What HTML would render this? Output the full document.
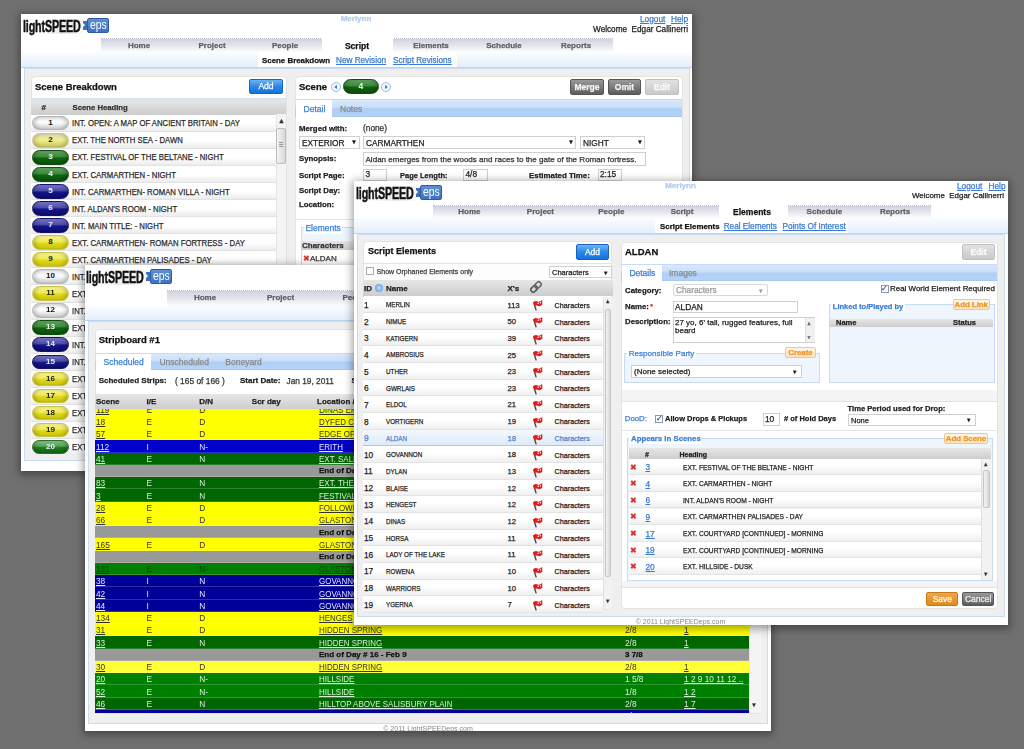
<!DOCTYPE html><html><head><meta charset="utf-8"><style>
*{margin:0;padding:0;box-sizing:border-box}
html,body{width:1024px;height:749px;overflow:hidden}
body{background:#707070;position:relative;font-family:"Liberation Sans",sans-serif;}
.win{position:absolute;background:#fff;overflow:hidden;box-shadow:0 2px 8px 2px rgba(0,0,0,.36);}
.pg{position:absolute;width:1024px;height:749px}
.t{position:absolute;white-space:nowrap;-webkit-text-stroke:.25px currentColor}
.win{filter:blur(.35px)}
.r{position:absolute}
.nav{background:linear-gradient(#cfd2df,#e9eaf0 60%,#fdfdfd);border-top:1px dotted #b9bccb}
.band{background:linear-gradient(#fbfdff,#e4eefa);border-bottom:1px solid #bcd5f1}
.cbg{background:#efefef}
.ib{border:1px solid #c8dcf4}
.pan{background:#fff;border:1px solid #e3e3e3;border-radius:4px}
.hdr{background:linear-gradient(#e6e6e6,#cdcdcd)}
.tabs{background:linear-gradient(#d9e8fb,#c9dff9 45%,#afcff6 55%,#b5d2f6);border-top:1px solid #c6dbf5;border-bottom:1px solid #a9c8ef}
.btnb{background:linear-gradient(#6ab4f6,#2a8ae8 50%,#1672dc);border:1px solid #1a62c0;border-radius:2px}
.btng{background:linear-gradient(#9a9a9a,#5c5c5c);border:1px solid #555;border-radius:2px}
.btnl{background:linear-gradient(#e2e2e2,#c9c9c9);border:1px solid #c0c0c0;border-radius:2px}
.btno{background:linear-gradient(#fff6e8,#fde3bd);border:1px solid #f2c68a;border-radius:2px}
.inp{background:#fff;border:1px solid #cfcfcf}
.logo1{position:absolute;font-weight:bold;color:#111;transform-origin:0 0;}
.eps{position:absolute;background:linear-gradient(#5d8fd6,#3f72bf);border:1px solid #2e5ca0;border-radius:2px;color:#fff;text-align:center}
.pill{position:absolute;border-radius:8px;text-align:center;font-weight:bold;box-shadow:inset 5px 0 4px -3px rgba(0,0,0,.22),inset -5px 0 4px -3px rgba(0,0,0,.22)}
</style></head><body><div class="win" id="w1" style="left:21px;top:14px;width:671px;height:457px"><div class="pg" style="left:-21px;top:-14px">
<div class="r " style="left:37.00px;top:19.00px;width:48.00px;height:15.00px;background:linear-gradient(100deg,rgba(225,225,225,0) 0%,rgba(215,215,215,.55) 60%,rgba(230,230,230,.2));transform:skewX(-20deg);"></div>
<div class="logo1" style="left:23px;top:17px;font-size:16px;line-height:20px;transform:scaleX(.67);letter-spacing:-0.2px;-webkit-text-stroke:.5px #111">lightSPEED</div>
<div class="r" style="left:82.5px;top:20.5px;width:6px;height:9px;background:#3f6fb8"></div>
<div class="eps" style="left:86.5px;top:18px;width:22.5px;height:14.5px;"><div style="position:absolute;left:2.5px;top:-2.5px;font-size:13px;line-height:16px;transform:scaleX(.8);transform-origin:0 0">eps</div></div>
<div class="r" style="left:82.5px;top:22.5px;width:0;height:0;border-top:2.5px solid transparent;border-bottom:2.5px solid transparent;border-left:2.5px solid #fff"></div>
<div class="t " style="left:206.00px;width:300px;text-align:center;top:15.23px;font-size:8px;line-height:8px;color:#b0cbee;font-weight:bold;">Merlynn</div>
<div class="t " style="left:640.00px;top:14.97px;font-size:8.3px;line-height:8.3px;color:#3a7bd0;text-decoration:underline;">Logout</div>
<div class="t " style="left:671.00px;top:14.97px;font-size:8.3px;line-height:8.3px;color:#3a7bd0;text-decoration:underline;">Help</div>
<div class="t " style="left:288.00px;width:400px;text-align:right;top:25.56px;font-size:8.2px;line-height:8.2px;color:#222;">Welcome  Edgar Callinerri</div>
<div class="r nav" style="left:101.00px;top:38.00px;width:512.00px;height:14.00px;"></div>
<div class="r " style="left:322.00px;top:38.00px;width:71.00px;height:14.00px;background:#fff"></div>
<div class="t " style="left:99.00px;width:80px;text-align:center;top:42.23px;font-size:8px;line-height:8px;color:#606060;font-weight:bold;">Home</div>
<div class="t " style="left:172.00px;width:80px;text-align:center;top:42.23px;font-size:8px;line-height:8px;color:#606060;font-weight:bold;">Project</div>
<div class="t " style="left:245.00px;width:80px;text-align:center;top:42.23px;font-size:8px;line-height:8px;color:#606060;font-weight:bold;">People</div>
<div class="t " style="left:317.00px;width:80px;text-align:center;top:41.80px;font-size:8.5px;line-height:8.5px;color:#111;font-weight:bold;">Script</div>
<div class="t " style="left:391.00px;width:80px;text-align:center;top:42.23px;font-size:8px;line-height:8px;color:#606060;font-weight:bold;">Elements</div>
<div class="t " style="left:464.00px;width:80px;text-align:center;top:42.23px;font-size:8px;line-height:8px;color:#606060;font-weight:bold;">Schedule</div>
<div class="t " style="left:536.00px;width:80px;text-align:center;top:42.23px;font-size:8px;line-height:8px;color:#606060;font-weight:bold;">Reports</div>
<div class="r band" style="left:21.00px;top:52.00px;width:671.00px;height:16.00px;"></div>
<div class="r " style="left:258.00px;top:52.00px;width:199.00px;height:15.00px;background:#fff"></div>
<div class="t " style="left:262.00px;top:57.31px;font-size:7.9px;line-height:7.9px;color:#111;font-weight:bold;">Scene Breakdown</div>
<div class="t " style="left:336.00px;top:57.06px;font-size:8.2px;line-height:8.2px;color:#3a7bd0;text-decoration:underline;">New Revision</div>
<div class="t " style="left:393.00px;top:57.06px;font-size:8.2px;line-height:8.2px;color:#3a7bd0;text-decoration:underline;">Script Revisions</div>
<div class="r " style="left:24.00px;top:68.00px;width:665.50px;height:393.00px;background:#efefef"></div>
<div class="r ib" style="left:24.00px;top:68.00px;width:665.50px;height:393.00px;"></div>
<div class="r pan" style="left:31.00px;top:76.00px;width:256.00px;height:379.00px;"></div>
<div class="t " style="left:35.00px;top:81.96px;font-size:9.5px;line-height:9.5px;color:#111;font-weight:bold;">Scene Breakdown</div>
<div class="r btnb" style="left:249.00px;top:79.00px;width:34.00px;height:15.00px;"></div>
<div class="t " style="left:246.00px;width:40px;text-align:center;top:82.30px;font-size:8.5px;line-height:8.5px;color:#fff;">Add</div>
<div class="r " style="left:31.00px;top:98.00px;width:256.00px;height:1.50px;background:#d5e5f7"></div>
<div class="r hdr" style="left:31.00px;top:99.50px;width:255.00px;height:15.50px;"></div>
<div class="t " style="left:41.50px;top:103.73px;font-size:8px;line-height:8px;color:#333;font-weight:bold;">#</div>
<div class="t " style="left:72.60px;top:103.98px;font-size:7.7px;line-height:7.7px;color:#333;font-weight:bold;">Scene Heading</div>
<div class="r" style="left:31.00px;top:115.00px;width:245.00px;height:339.50px;overflow:hidden"><div class="pg" style="left:-31.00px;top:-115.00px">
<div class="r " style="left:31.00px;top:115.00px;width:245.00px;height:17.00px;background:linear-gradient(#ffffff 55%,#ececec);border-bottom:1px solid #e2e2e2"></div>
<div class="pill" style="left:32.00px;top:115.80px;width:37.00px;height:14.70px;background:linear-gradient(#dcdcdc,#ffffff 40%,#f6f6f6 55%,#c9c9c9);border:1px solid #b4b4b4;color:#111;font-size:8px;line-height:12.70px">1</div>
<div class="t " style="left:72.00px;top:119.38px;font-size:9px;line-height:9px;color:#2a2a2a;transform:scaleX(0.86);transform-origin:0 0;">INT. OPEN: A MAP OF ANCIENT BRITAIN - DAY</div>
<div class="r " style="left:31.00px;top:132.05px;width:245.00px;height:17.00px;background:linear-gradient(#ffffff 55%,#ececec);border-bottom:1px solid #e2e2e2"></div>
<div class="pill" style="left:32.00px;top:132.85px;width:37.00px;height:14.70px;background:linear-gradient(#d9d2ae,#f1ef92 40%,#ecea80 55%,#c6c062);border:1px solid #c8c190;color:#222;font-size:8px;line-height:12.70px">2</div>
<div class="t " style="left:72.00px;top:136.43px;font-size:9px;line-height:9px;color:#2a2a2a;transform:scaleX(0.86);transform-origin:0 0;">EXT. THE NORTH SEA - DAWN</div>
<div class="r " style="left:31.00px;top:149.10px;width:245.00px;height:17.00px;background:linear-gradient(#ffffff 55%,#ececec);border-bottom:1px solid #e2e2e2"></div>
<div class="pill" style="left:32.00px;top:149.90px;width:37.00px;height:14.70px;background:linear-gradient(#5f9f5f,#3f8b3f 42%,#0f650f 55%,#0a4e0a);border:1px solid #0d4d0d;color:#e8f4e8;font-size:8px;line-height:12.70px">3</div>
<div class="t " style="left:72.00px;top:153.48px;font-size:9px;line-height:9px;color:#2a2a2a;transform:scaleX(0.86);transform-origin:0 0;">EXT. FESTIVAL OF THE BELTANE - NIGHT</div>
<div class="r " style="left:31.00px;top:166.15px;width:245.00px;height:17.00px;background:linear-gradient(#ffffff 55%,#ececec);border-bottom:1px solid #e2e2e2"></div>
<div class="pill" style="left:32.00px;top:166.95px;width:37.00px;height:14.70px;background:linear-gradient(#5f9f5f,#3f8b3f 42%,#0f650f 55%,#0a4e0a);border:1px solid #0d4d0d;color:#e8f4e8;font-size:8px;line-height:12.70px">4</div>
<div class="t " style="left:72.00px;top:170.53px;font-size:9px;line-height:9px;color:#2a2a2a;transform:scaleX(0.86);transform-origin:0 0;">EXT. CARMARTHEN - NIGHT</div>
<div class="r " style="left:31.00px;top:183.20px;width:245.00px;height:17.00px;background:linear-gradient(#ffffff 55%,#ececec);border-bottom:1px solid #e2e2e2"></div>
<div class="pill" style="left:32.00px;top:184.00px;width:37.00px;height:14.70px;background:linear-gradient(#7474c2,#4d4dab 42%,#151589 55%,#0c0c6a);border:1px solid #12126a;color:#e8e8ff;font-size:8px;line-height:12.70px">5</div>
<div class="t " style="left:72.00px;top:187.58px;font-size:9px;line-height:9px;color:#2a2a2a;transform:scaleX(0.86);transform-origin:0 0;">INT. CARMARTHEN- ROMAN VILLA - NIGHT</div>
<div class="r " style="left:31.00px;top:200.25px;width:245.00px;height:17.00px;background:linear-gradient(#ffffff 55%,#ececec);border-bottom:1px solid #e2e2e2"></div>
<div class="pill" style="left:32.00px;top:201.05px;width:37.00px;height:14.70px;background:linear-gradient(#7474c2,#4d4dab 42%,#151589 55%,#0c0c6a);border:1px solid #12126a;color:#e8e8ff;font-size:8px;line-height:12.70px">6</div>
<div class="t " style="left:72.00px;top:204.63px;font-size:9px;line-height:9px;color:#2a2a2a;transform:scaleX(0.86);transform-origin:0 0;">INT. ALDAN'S ROOM - NIGHT</div>
<div class="r " style="left:31.00px;top:217.30px;width:245.00px;height:17.00px;background:linear-gradient(#ffffff 55%,#ececec);border-bottom:1px solid #e2e2e2"></div>
<div class="pill" style="left:32.00px;top:218.10px;width:37.00px;height:14.70px;background:linear-gradient(#7474c2,#4d4dab 42%,#151589 55%,#0c0c6a);border:1px solid #12126a;color:#e8e8ff;font-size:8px;line-height:12.70px">7</div>
<div class="t " style="left:72.00px;top:221.68px;font-size:9px;line-height:9px;color:#2a2a2a;transform:scaleX(0.86);transform-origin:0 0;">INT. MAIN TITLE: - NIGHT</div>
<div class="r " style="left:31.00px;top:234.35px;width:245.00px;height:17.00px;background:linear-gradient(#ffffff 55%,#ececec);border-bottom:1px solid #e2e2e2"></div>
<div class="pill" style="left:32.00px;top:235.15px;width:37.00px;height:14.70px;background:linear-gradient(#f1ee8c,#efec5c 42%,#e0da1c 55%,#c9c10c);border:1px solid #c9c24a;color:#222;font-size:8px;line-height:12.70px">8</div>
<div class="t " style="left:72.00px;top:238.73px;font-size:9px;line-height:9px;color:#2a2a2a;transform:scaleX(0.86);transform-origin:0 0;">EXT. CARMARTHEN- ROMAN FORTRESS - DAY</div>
<div class="r " style="left:31.00px;top:251.40px;width:245.00px;height:17.00px;background:linear-gradient(#ffffff 55%,#ececec);border-bottom:1px solid #e2e2e2"></div>
<div class="pill" style="left:32.00px;top:252.20px;width:37.00px;height:14.70px;background:linear-gradient(#f1ee8c,#efec5c 42%,#e0da1c 55%,#c9c10c);border:1px solid #c9c24a;color:#222;font-size:8px;line-height:12.70px">9</div>
<div class="t " style="left:72.00px;top:255.78px;font-size:9px;line-height:9px;color:#2a2a2a;transform:scaleX(0.86);transform-origin:0 0;">EXT. CARMARTHEN PALISADES - DAY</div>
<div class="r " style="left:31.00px;top:268.45px;width:245.00px;height:17.00px;background:linear-gradient(#ffffff 55%,#ececec);border-bottom:1px solid #e2e2e2"></div>
<div class="pill" style="left:32.00px;top:269.25px;width:37.00px;height:14.70px;background:linear-gradient(#dcdcdc,#ffffff 40%,#f6f6f6 55%,#c9c9c9);border:1px solid #b4b4b4;color:#111;font-size:8px;line-height:12.70px">10</div>
<div class="t " style="left:72.00px;top:272.83px;font-size:9px;line-height:9px;color:#2a2a2a;transform:scaleX(0.86);transform-origin:0 0;">INT. CARMARTHEN- ROMAN VILLA - NIGHT</div>
<div class="r " style="left:31.00px;top:285.50px;width:245.00px;height:17.00px;background:linear-gradient(#ffffff 55%,#ececec);border-bottom:1px solid #e2e2e2"></div>
<div class="pill" style="left:32.00px;top:286.30px;width:37.00px;height:14.70px;background:linear-gradient(#f1ee8c,#efec5c 42%,#e0da1c 55%,#c9c10c);border:1px solid #c9c24a;color:#222;font-size:8px;line-height:12.70px">11</div>
<div class="t " style="left:72.00px;top:289.88px;font-size:9px;line-height:9px;color:#2a2a2a;transform:scaleX(0.86);transform-origin:0 0;">EXT. CARMARTHEN - DAY</div>
<div class="r " style="left:31.00px;top:302.55px;width:245.00px;height:17.00px;background:linear-gradient(#ffffff 55%,#ececec);border-bottom:1px solid #e2e2e2"></div>
<div class="pill" style="left:32.00px;top:303.35px;width:37.00px;height:14.70px;background:linear-gradient(#dcdcdc,#ffffff 40%,#f6f6f6 55%,#c9c9c9);border:1px solid #b4b4b4;color:#111;font-size:8px;line-height:12.70px">12</div>
<div class="t " style="left:72.00px;top:306.93px;font-size:9px;line-height:9px;color:#2a2a2a;transform:scaleX(0.86);transform-origin:0 0;">INT. ROMAN VILLA - DAY</div>
<div class="r " style="left:31.00px;top:319.60px;width:245.00px;height:17.00px;background:linear-gradient(#ffffff 55%,#ececec);border-bottom:1px solid #e2e2e2"></div>
<div class="pill" style="left:32.00px;top:320.40px;width:37.00px;height:14.70px;background:linear-gradient(#5f9f5f,#3f8b3f 42%,#0f650f 55%,#0a4e0a);border:1px solid #0d4d0d;color:#e8f4e8;font-size:8px;line-height:12.70px">13</div>
<div class="t " style="left:72.00px;top:323.98px;font-size:9px;line-height:9px;color:#2a2a2a;transform:scaleX(0.86);transform-origin:0 0;">EXT. COURTYARD - NIGHT</div>
<div class="r " style="left:31.00px;top:336.65px;width:245.00px;height:17.00px;background:linear-gradient(#ffffff 55%,#ececec);border-bottom:1px solid #e2e2e2"></div>
<div class="pill" style="left:32.00px;top:337.45px;width:37.00px;height:14.70px;background:linear-gradient(#7474c2,#4d4dab 42%,#151589 55%,#0c0c6a);border:1px solid #12126a;color:#e8e8ff;font-size:8px;line-height:12.70px">14</div>
<div class="t " style="left:72.00px;top:341.03px;font-size:9px;line-height:9px;color:#2a2a2a;transform:scaleX(0.86);transform-origin:0 0;">INT. BEDROOM - NIGHT</div>
<div class="r " style="left:31.00px;top:353.70px;width:245.00px;height:17.00px;background:linear-gradient(#ffffff 55%,#ececec);border-bottom:1px solid #e2e2e2"></div>
<div class="pill" style="left:32.00px;top:354.50px;width:37.00px;height:14.70px;background:linear-gradient(#7474c2,#4d4dab 42%,#151589 55%,#0c0c6a);border:1px solid #12126a;color:#e8e8ff;font-size:8px;line-height:12.70px">15</div>
<div class="t " style="left:72.00px;top:358.08px;font-size:9px;line-height:9px;color:#2a2a2a;transform:scaleX(0.86);transform-origin:0 0;">INT. HALL - NIGHT</div>
<div class="r " style="left:31.00px;top:370.75px;width:245.00px;height:17.00px;background:linear-gradient(#ffffff 55%,#ececec);border-bottom:1px solid #e2e2e2"></div>
<div class="pill" style="left:32.00px;top:371.55px;width:37.00px;height:14.70px;background:linear-gradient(#f1ee8c,#efec5c 42%,#e0da1c 55%,#c9c10c);border:1px solid #c9c24a;color:#222;font-size:8px;line-height:12.70px">16</div>
<div class="t " style="left:72.00px;top:375.13px;font-size:9px;line-height:9px;color:#2a2a2a;transform:scaleX(0.86);transform-origin:0 0;">EXT. FOREST - DAY</div>
<div class="r " style="left:31.00px;top:387.80px;width:245.00px;height:17.00px;background:linear-gradient(#ffffff 55%,#ececec);border-bottom:1px solid #e2e2e2"></div>
<div class="pill" style="left:32.00px;top:388.60px;width:37.00px;height:14.70px;background:linear-gradient(#f1ee8c,#efec5c 42%,#e0da1c 55%,#c9c10c);border:1px solid #c9c24a;color:#222;font-size:8px;line-height:12.70px">17</div>
<div class="t " style="left:72.00px;top:392.18px;font-size:9px;line-height:9px;color:#2a2a2a;transform:scaleX(0.86);transform-origin:0 0;">EXT. COURTYARD - MORNING</div>
<div class="r " style="left:31.00px;top:404.85px;width:245.00px;height:17.00px;background:linear-gradient(#ffffff 55%,#ececec);border-bottom:1px solid #e2e2e2"></div>
<div class="pill" style="left:32.00px;top:405.65px;width:37.00px;height:14.70px;background:linear-gradient(#f1ee8c,#efec5c 42%,#e0da1c 55%,#c9c10c);border:1px solid #c9c24a;color:#222;font-size:8px;line-height:12.70px">18</div>
<div class="t " style="left:72.00px;top:409.23px;font-size:9px;line-height:9px;color:#2a2a2a;transform:scaleX(0.86);transform-origin:0 0;">EXT. COURTYARD - MORNING</div>
<div class="r " style="left:31.00px;top:421.90px;width:245.00px;height:17.00px;background:linear-gradient(#ffffff 55%,#ececec);border-bottom:1px solid #e2e2e2"></div>
<div class="pill" style="left:32.00px;top:422.70px;width:37.00px;height:14.70px;background:linear-gradient(#f1ee8c,#efec5c 42%,#e0da1c 55%,#c9c10c);border:1px solid #c9c24a;color:#222;font-size:8px;line-height:12.70px">19</div>
<div class="t " style="left:72.00px;top:426.28px;font-size:9px;line-height:9px;color:#2a2a2a;transform:scaleX(0.86);transform-origin:0 0;">EXT. CARMARTHEN - DAY</div>
<div class="r " style="left:31.00px;top:438.95px;width:245.00px;height:17.00px;background:linear-gradient(#ffffff 55%,#ececec);border-bottom:1px solid #e2e2e2"></div>
<div class="pill" style="left:32.00px;top:439.75px;width:37.00px;height:14.70px;background:linear-gradient(#7dbf7d,#56a556 42%,#1f7d1f 55%,#0f5f0f);border:1px solid #2d6d2d;color:#eef;font-size:8px;line-height:12.70px">20</div>
<div class="t " style="left:72.00px;top:443.33px;font-size:9px;line-height:9px;color:#2a2a2a;transform:scaleX(0.86);transform-origin:0 0;">EXT. HILLSIDE - DUSK</div>
</div></div>
<div class="r " style="left:276.00px;top:114.00px;width:10.00px;height:341.00px;background:#f4f4f4;border-left:1px solid #e6e6e6"></div>
<div class="r " style="left:276.00px;top:127.60px;width:9.50px;height:36.10px;background:linear-gradient(90deg,#f4f4f4,#d8d8d8);border:1px solid #bdbdbd;border-radius:2px"></div>
<div class="r " style="left:278.50px;top:142.00px;width:4.50px;height:1.00px;background:#999"></div>
<div class="r " style="left:278.50px;top:144.00px;width:4.50px;height:1.00px;background:#999"></div>
<div class="r " style="left:278.50px;top:146.00px;width:4.50px;height:1.00px;background:#999"></div>
<div class="t" style="left:278px;top:117px;font-size:7px;color:#333">&#9650;</div>
<div class="r pan" style="left:295.00px;top:76.00px;width:387.50px;height:394.00px;"></div>
<div class="t " style="left:299.00px;top:82.46px;font-size:9.5px;line-height:9.5px;color:#111;font-weight:bold;">Scene</div>
<div class="r" style="left:331px;top:82px;width:10px;height:10px;border-radius:50%;border:1px solid #9cbde6;background:#f4f8fd"></div>
<div class="r" style="left:334px;top:85px;width:0;height:0;border-top:2.5px solid transparent;border-bottom:2.5px solid transparent;border-right:3px solid #3b7fd4"></div>
<div class="r" style="left:381.4px;top:82px;width:10px;height:10px;border-radius:50%;border:1px solid #9cbde6;background:#f4f8fd"></div>
<div class="r" style="left:385.4px;top:85px;width:0;height:0;border-top:2.5px solid transparent;border-bottom:2.5px solid transparent;border-left:3px solid #3b7fd4"></div>
<div class="pill" style="left:342.60px;top:79.40px;width:36.40px;height:15.00px;background:linear-gradient(#5f9f5f,#3f8b3f 42%,#0f650f 55%,#0a4e0a);border:1px solid #0d4d0d;color:#e8f4e8;font-size:8.5px;line-height:13.00px">4</div>
<div class="r btng" style="left:570.00px;top:79.00px;width:34.00px;height:16.00px;"></div>
<div class="t " style="left:562.00px;width:50px;text-align:center;top:82.80px;font-size:8.5px;line-height:8.5px;color:#f2f2f2;font-weight:bold;">Merge</div>
<div class="r btng" style="left:608.00px;top:79.00px;width:33.00px;height:16.00px;"></div>
<div class="t " style="left:599.50px;width:50px;text-align:center;top:82.80px;font-size:8.5px;line-height:8.5px;color:#f2f2f2;font-weight:bold;">Omit</div>
<div class="r btnl" style="left:645.00px;top:79.00px;width:34.00px;height:16.00px;"></div>
<div class="t " style="left:637.00px;width:50px;text-align:center;top:82.80px;font-size:8.5px;line-height:8.5px;color:#fafafa;font-weight:bold;">Edit</div>
<div class="r tabs" style="left:295.00px;top:99.00px;width:387.00px;height:18.00px;"></div>
<div class="r " style="left:296.00px;top:100.00px;width:36.00px;height:17.00px;background:#fff"></div>
<div class="t " style="left:303.60px;top:104.80px;font-size:8.5px;line-height:8.5px;color:#3b7fd4;">Detail</div>
<div class="t " style="left:340.00px;top:104.80px;font-size:8.5px;line-height:8.5px;color:#8a8a8a;">Notes</div>
<div class="t " style="left:299.00px;top:124.90px;font-size:7.8px;line-height:7.8px;color:#222;font-weight:bold;">Merged with:</div>
<div class="t " style="left:363.00px;top:124.47px;font-size:8.3px;line-height:8.3px;color:#333;">(none)</div>
<div class="r inp" style="left:299.00px;top:136.00px;width:61.00px;height:13.00px;"></div>
<div class="t " style="left:302.00px;top:138.97px;font-size:8.3px;line-height:8.3px;color:#222;">EXTERIOR</div>
<div class="t" style="left:351px;top:139px;font-size:6px;color:#111">&#9660;</div>
<div class="r inp" style="left:363.00px;top:136.00px;width:213.00px;height:13.00px;"></div>
<div class="t " style="left:366.00px;top:138.97px;font-size:8.3px;line-height:8.3px;color:#222;">CARMARTHEN</div>
<div class="t" style="left:568px;top:139px;font-size:6px;color:#111">&#9660;</div>
<div class="r inp" style="left:580.00px;top:136.00px;width:65.00px;height:13.00px;"></div>
<div class="t " style="left:583.00px;top:138.97px;font-size:8.3px;line-height:8.3px;color:#222;">NIGHT</div>
<div class="t" style="left:637px;top:139px;font-size:6px;color:#111">&#9660;</div>
<div class="t " style="left:299.00px;top:155.40px;font-size:7.8px;line-height:7.8px;color:#222;font-weight:bold;">Synopsis:</div>
<div class="r inp" style="left:363.00px;top:152.00px;width:283.00px;height:14.00px;"></div>
<div class="t " style="left:365.50px;top:155.69px;font-size:8.05px;line-height:8.05px;color:#333;">Aldan emerges from the woods and races to the gate of the Roman fortress.</div>
<div class="t " style="left:299.00px;top:171.80px;font-size:7.8px;line-height:7.8px;color:#222;font-weight:bold;">Script Page:</div>
<div class="r inp" style="left:363.00px;top:168.60px;width:24.00px;height:12.90px;"></div>
<div class="t " style="left:365.50px;top:170.47px;font-size:8.3px;line-height:8.3px;color:#222;">3</div>
<div class="t " style="left:400.00px;top:172.05px;font-size:7.5px;line-height:7.5px;color:#222;font-weight:bold;">Page Length:</div>
<div class="r inp" style="left:463.00px;top:168.60px;width:25.00px;height:12.90px;"></div>
<div class="t " style="left:465.50px;top:170.47px;font-size:8.3px;line-height:8.3px;color:#222;">4/8</div>
<div class="t " style="left:529.00px;top:171.71px;font-size:7.9px;line-height:7.9px;color:#222;font-weight:bold;">Estimated Time:</div>
<div class="r inp" style="left:598.00px;top:168.60px;width:24.00px;height:12.90px;"></div>
<div class="t " style="left:600.00px;top:170.47px;font-size:8.3px;line-height:8.3px;color:#222;">2:15</div>
<div class="t " style="left:299.00px;top:186.80px;font-size:7.8px;line-height:7.8px;color:#222;font-weight:bold;">Script Day:</div>
<div class="t " style="left:299.00px;top:200.80px;font-size:7.8px;line-height:7.8px;color:#222;font-weight:bold;">Location:</div>
<div class="r " style="left:296.00px;top:218.50px;width:387.00px;height:1.00px;background:#d7e6f7"></div>
<div class="r " style="left:301.40px;top:227.40px;width:381.60px;height:242.60px;background:#eef5fd;border:1px solid #c7dbf2"></div>
<div class="r " style="left:304.00px;top:224.00px;width:38.00px;height:10.00px;background:#fff"></div>
<div class="t " style="left:305.40px;top:223.80px;font-size:8.5px;line-height:8.5px;color:#3b7fd4;">Elements</div>
<div class="r hdr" style="left:301.40px;top:241.40px;width:381.60px;height:8.60px;"></div>
<div class="t " style="left:302.00px;top:242.23px;font-size:8px;line-height:8px;color:#333;font-weight:bold;">Characters</div>
<div class="r " style="left:302.00px;top:250.00px;width:381.00px;height:220.00px;background:#fff"></div>
<div class="t " style="left:302.50px;top:255.23px;font-size:8px;line-height:8px;color:#e03030;">✖</div>
<div class="t " style="left:310.00px;top:255.23px;font-size:8px;line-height:8px;color:#333;">ALDAN</div>
</div></div>
<div class="win" id="w2" style="left:85px;top:265px;width:686px;height:466px"><div class="pg" style="left:-85px;top:-265px">
<div class="r " style="left:100.00px;top:270.00px;width:48.00px;height:15.00px;background:linear-gradient(100deg,rgba(225,225,225,0) 0%,rgba(215,215,215,.55) 60%,rgba(230,230,230,.2));transform:skewX(-20deg);"></div>
<div class="logo1" style="left:86px;top:268px;font-size:16px;line-height:20px;transform:scaleX(.67);letter-spacing:-0.2px;-webkit-text-stroke:.5px #111">lightSPEED</div>
<div class="r" style="left:145.5px;top:271.5px;width:6px;height:9px;background:#3f6fb8"></div>
<div class="eps" style="left:149.5px;top:269px;width:22.5px;height:14.5px;"><div style="position:absolute;left:2.5px;top:-2.5px;font-size:13px;line-height:16px;transform:scaleX(.8);transform-origin:0 0">eps</div></div>
<div class="r" style="left:145.5px;top:273.5px;width:0;height:0;border-top:2.5px solid transparent;border-bottom:2.5px solid transparent;border-left:2.5px solid #fff"></div>
<div class="r nav" style="left:167.00px;top:289.60px;width:533.00px;height:16.40px;"></div>
<div class="t " style="left:165.00px;width:80px;text-align:center;top:293.73px;font-size:8px;line-height:8px;color:#606060;font-weight:bold;">Home</div>
<div class="t " style="left:240.50px;width:80px;text-align:center;top:293.73px;font-size:8px;line-height:8px;color:#606060;font-weight:bold;">Project</div>
<div class="t " style="left:315.50px;width:80px;text-align:center;top:293.73px;font-size:8px;line-height:8px;color:#606060;font-weight:bold;">People</div>
<div class="t " style="left:390.00px;width:80px;text-align:center;top:293.73px;font-size:8px;line-height:8px;color:#606060;font-weight:bold;">Script</div>
<div class="t " style="left:465.00px;width:80px;text-align:center;top:293.73px;font-size:8px;line-height:8px;color:#606060;font-weight:bold;">Elements</div>
<div class="t " style="left:540.00px;width:80px;text-align:center;top:293.73px;font-size:8px;line-height:8px;color:#606060;font-weight:bold;">Schedule</div>
<div class="t " style="left:615.00px;width:80px;text-align:center;top:293.73px;font-size:8px;line-height:8px;color:#606060;font-weight:bold;">Reports</div>
<div class="r band" style="left:85.00px;top:306.00px;width:686.00px;height:15.00px;"></div>
<div class="r " style="left:88.00px;top:321.00px;width:680.00px;height:402.50px;background:#efefef"></div>
<div class="r ib" style="left:88.00px;top:321.00px;width:680.00px;height:402.50px;"></div>
<div class="r pan" style="left:95.00px;top:329.00px;width:667.00px;height:384.50px;"></div>
<div class="t " style="left:98.70px;top:334.96px;font-size:9.5px;line-height:9.5px;color:#111;font-weight:bold;">Stripboard #1</div>
<div class="r tabs" style="left:95.00px;top:352.50px;width:667.00px;height:17.70px;"></div>
<div class="r " style="left:96.00px;top:353.50px;width:54.60px;height:16.70px;background:#fff"></div>
<div class="t " style="left:103.60px;top:357.80px;font-size:8.5px;line-height:8.5px;color:#3b7fd4;">Scheduled</div>
<div class="t " style="left:159.40px;top:357.80px;font-size:8.5px;line-height:8.5px;color:#8a8a8a;">Unscheduled</div>
<div class="t " style="left:225.30px;top:357.80px;font-size:8.5px;line-height:8.5px;color:#8a8a8a;">Boneyard</div>
<div class="t " style="left:98.70px;top:377.23px;font-size:8px;line-height:8px;color:#222;font-weight:bold;">Scheduled Strips:</div>
<div class="t " style="left:175.00px;top:376.89px;font-size:8.4px;line-height:8.4px;color:#333;">( 165 of 166 )</div>
<div class="t " style="left:240.00px;top:377.23px;font-size:8px;line-height:8px;color:#222;font-weight:bold;">Start Date:</div>
<div class="t " style="left:286.50px;top:376.97px;font-size:8.3px;line-height:8.3px;color:#333;">Jan 19, 2011</div>
<div class="t " style="left:351.60px;top:377.23px;font-size:8px;line-height:8px;color:#222;font-weight:bold;">Scheduled Days:</div>
<div class="r hdr" style="left:95.00px;top:394.00px;width:654.00px;height:14.60px;"></div>
<div class="t " style="left:96.00px;top:397.73px;font-size:8px;line-height:8px;color:#222;font-weight:bold;">Scene</div>
<div class="t " style="left:146.50px;top:397.73px;font-size:8px;line-height:8px;color:#222;font-weight:bold;">I/E</div>
<div class="t " style="left:199.30px;top:397.73px;font-size:8px;line-height:8px;color:#222;font-weight:bold;">D/N</div>
<div class="t " style="left:251.80px;top:397.73px;font-size:8px;line-height:8px;color:#222;font-weight:bold;">Scr day</div>
<div class="t " style="left:317.00px;top:397.73px;font-size:8px;line-height:8px;color:#222;font-weight:bold;">Location / Set</div>
<div class="t " style="left:625.00px;top:397.73px;font-size:8px;line-height:8px;color:#222;font-weight:bold;">Pages</div>
<div class="t " style="left:684.00px;top:397.73px;font-size:8px;line-height:8px;color:#222;font-weight:bold;">Scenes</div>
<div class="r" style="left:95.00px;top:394.00px;width:654.00px;height:319.00px;overflow:hidden"><div class="pg" style="left:-95.00px;top:-394.00px">
<div class="r " style="left:95.00px;top:403.55px;width:653.50px;height:12.25px;background:#ffff00;border-bottom:1px solid rgba(255,255,255,.18)"></div>
<div class="t " style="left:96.00px;top:405.82px;font-size:8.3px;line-height:8.3px;color:#333;text-decoration:underline;;-webkit-text-stroke:0">119</div>
<div class="t " style="left:146.50px;top:405.82px;font-size:8.3px;line-height:8.3px;color:#333;;-webkit-text-stroke:0">E</div>
<div class="t " style="left:199.30px;top:405.82px;font-size:8.3px;line-height:8.3px;color:#333;;-webkit-text-stroke:0">D</div>
<div class="t " style="left:319.00px;top:405.82px;font-size:8.3px;line-height:8.3px;color:#333;transform:scaleX(0.96);transform-origin:0 0;text-decoration:underline;;-webkit-text-stroke:0">DINAS EMRYS</div>
<div class="t " style="left:625.00px;top:405.82px;font-size:8.3px;line-height:8.3px;color:#333;;-webkit-text-stroke:0">1/8</div>
<div class="t " style="left:684.00px;top:405.82px;font-size:8.3px;line-height:8.3px;color:#333;text-decoration:underline;;-webkit-text-stroke:0">1</div>
<div class="r " style="left:95.00px;top:415.80px;width:653.50px;height:12.25px;background:#ffff00;border-bottom:1px solid rgba(255,255,255,.18)"></div>
<div class="t " style="left:96.00px;top:418.07px;font-size:8.3px;line-height:8.3px;color:#333;text-decoration:underline;;-webkit-text-stroke:0">18</div>
<div class="t " style="left:146.50px;top:418.07px;font-size:8.3px;line-height:8.3px;color:#333;;-webkit-text-stroke:0">E</div>
<div class="t " style="left:199.30px;top:418.07px;font-size:8.3px;line-height:8.3px;color:#333;;-webkit-text-stroke:0">D</div>
<div class="t " style="left:319.00px;top:418.07px;font-size:8.3px;line-height:8.3px;color:#333;transform:scaleX(0.96);transform-origin:0 0;text-decoration:underline;;-webkit-text-stroke:0">DYFED CASTLE</div>
<div class="t " style="left:625.00px;top:418.07px;font-size:8.3px;line-height:8.3px;color:#333;;-webkit-text-stroke:0">2/8</div>
<div class="t " style="left:684.00px;top:418.07px;font-size:8.3px;line-height:8.3px;color:#333;text-decoration:underline;;-webkit-text-stroke:0">1</div>
<div class="r " style="left:95.00px;top:428.05px;width:653.50px;height:12.25px;background:#ffff00;border-bottom:1px solid rgba(255,255,255,.18)"></div>
<div class="t " style="left:96.00px;top:430.32px;font-size:8.3px;line-height:8.3px;color:#333;text-decoration:underline;;-webkit-text-stroke:0">57</div>
<div class="t " style="left:146.50px;top:430.32px;font-size:8.3px;line-height:8.3px;color:#333;;-webkit-text-stroke:0">E</div>
<div class="t " style="left:199.30px;top:430.32px;font-size:8.3px;line-height:8.3px;color:#333;;-webkit-text-stroke:0">D</div>
<div class="t " style="left:319.00px;top:430.32px;font-size:8.3px;line-height:8.3px;color:#333;transform:scaleX(0.96);transform-origin:0 0;text-decoration:underline;;-webkit-text-stroke:0">EDGE OF THE FOREST</div>
<div class="t " style="left:625.00px;top:430.32px;font-size:8.3px;line-height:8.3px;color:#333;;-webkit-text-stroke:0">1/8</div>
<div class="t " style="left:684.00px;top:430.32px;font-size:8.3px;line-height:8.3px;color:#333;text-decoration:underline;;-webkit-text-stroke:0">1</div>
<div class="r " style="left:95.00px;top:440.30px;width:653.50px;height:12.25px;background:#0000cc;border-bottom:1px solid rgba(255,255,255,.18)"></div>
<div class="t " style="left:96.00px;top:442.57px;font-size:8.3px;line-height:8.3px;color:#e6e6ff;text-decoration:underline;;-webkit-text-stroke:0">112</div>
<div class="t " style="left:146.50px;top:442.57px;font-size:8.3px;line-height:8.3px;color:#e6e6ff;;-webkit-text-stroke:0">I</div>
<div class="t " style="left:199.30px;top:442.57px;font-size:8.3px;line-height:8.3px;color:#e6e6ff;;-webkit-text-stroke:0">N-</div>
<div class="t " style="left:319.00px;top:442.57px;font-size:8.3px;line-height:8.3px;color:#e6e6ff;transform:scaleX(0.96);transform-origin:0 0;text-decoration:underline;;-webkit-text-stroke:0">ERITH</div>
<div class="t " style="left:625.00px;top:442.57px;font-size:8.3px;line-height:8.3px;color:#e6e6ff;;-webkit-text-stroke:0">2/8</div>
<div class="t " style="left:684.00px;top:442.57px;font-size:8.3px;line-height:8.3px;color:#e6e6ff;text-decoration:underline;;-webkit-text-stroke:0">1</div>
<div class="r " style="left:95.00px;top:452.55px;width:653.50px;height:12.25px;background:#006600;border-bottom:1px solid rgba(255,255,255,.18)"></div>
<div class="t " style="left:96.00px;top:454.82px;font-size:8.3px;line-height:8.3px;color:#d8ecd8;text-decoration:underline;;-webkit-text-stroke:0">41</div>
<div class="t " style="left:146.50px;top:454.82px;font-size:8.3px;line-height:8.3px;color:#d8ecd8;;-webkit-text-stroke:0">E</div>
<div class="t " style="left:199.30px;top:454.82px;font-size:8.3px;line-height:8.3px;color:#d8ecd8;;-webkit-text-stroke:0">N</div>
<div class="t " style="left:319.00px;top:454.82px;font-size:8.3px;line-height:8.3px;color:#d8ecd8;transform:scaleX(0.96);transform-origin:0 0;text-decoration:underline;;-webkit-text-stroke:0">EXT. SALISBURY PLAIN</div>
<div class="t " style="left:625.00px;top:454.82px;font-size:8.3px;line-height:8.3px;color:#d8ecd8;;-webkit-text-stroke:0">3/8</div>
<div class="t " style="left:684.00px;top:454.82px;font-size:8.3px;line-height:8.3px;color:#d8ecd8;text-decoration:underline;;-webkit-text-stroke:0">1</div>
<div class="r " style="left:95.00px;top:464.80px;width:653.50px;height:12.25px;background:#999999;border-bottom:1px solid rgba(255,255,255,.18)"></div>
<div class="t " style="left:319.00px;top:467.33px;font-size:8px;line-height:8px;color:#111;font-weight:bold;">End of Day # 14 - Feb 7</div>
<div class="t " style="left:625.00px;top:467.33px;font-size:8px;line-height:8px;color:#111;font-weight:bold;">2 1/8</div>
<div class="r " style="left:95.00px;top:477.05px;width:653.50px;height:12.25px;background:#006600;border-bottom:1px solid rgba(255,255,255,.18)"></div>
<div class="t " style="left:96.00px;top:479.32px;font-size:8.3px;line-height:8.3px;color:#d8ecd8;text-decoration:underline;;-webkit-text-stroke:0">83</div>
<div class="t " style="left:146.50px;top:479.32px;font-size:8.3px;line-height:8.3px;color:#d8ecd8;;-webkit-text-stroke:0">E</div>
<div class="t " style="left:199.30px;top:479.32px;font-size:8.3px;line-height:8.3px;color:#d8ecd8;;-webkit-text-stroke:0">N</div>
<div class="t " style="left:319.00px;top:479.32px;font-size:8.3px;line-height:8.3px;color:#d8ecd8;transform:scaleX(0.96);transform-origin:0 0;text-decoration:underline;;-webkit-text-stroke:0">EXT. THE FOREST</div>
<div class="t " style="left:625.00px;top:479.32px;font-size:8.3px;line-height:8.3px;color:#d8ecd8;;-webkit-text-stroke:0">4/8</div>
<div class="t " style="left:684.00px;top:479.32px;font-size:8.3px;line-height:8.3px;color:#d8ecd8;text-decoration:underline;;-webkit-text-stroke:0">1</div>
<div class="r " style="left:95.00px;top:489.30px;width:653.50px;height:12.25px;background:#006600;border-bottom:1px solid rgba(255,255,255,.18)"></div>
<div class="t " style="left:96.00px;top:491.57px;font-size:8.3px;line-height:8.3px;color:#d8ecd8;text-decoration:underline;;-webkit-text-stroke:0">3</div>
<div class="t " style="left:146.50px;top:491.57px;font-size:8.3px;line-height:8.3px;color:#d8ecd8;;-webkit-text-stroke:0">E</div>
<div class="t " style="left:199.30px;top:491.57px;font-size:8.3px;line-height:8.3px;color:#d8ecd8;;-webkit-text-stroke:0">N</div>
<div class="t " style="left:319.00px;top:491.57px;font-size:8.3px;line-height:8.3px;color:#d8ecd8;transform:scaleX(0.96);transform-origin:0 0;text-decoration:underline;;-webkit-text-stroke:0">FESTIVAL OF THE BELTANE</div>
<div class="t " style="left:625.00px;top:491.57px;font-size:8.3px;line-height:8.3px;color:#d8ecd8;;-webkit-text-stroke:0">1 2/8</div>
<div class="t " style="left:684.00px;top:491.57px;font-size:8.3px;line-height:8.3px;color:#d8ecd8;text-decoration:underline;;-webkit-text-stroke:0">1</div>
<div class="r " style="left:95.00px;top:501.55px;width:653.50px;height:12.25px;background:#ffff00;border-bottom:1px solid rgba(255,255,255,.18)"></div>
<div class="t " style="left:96.00px;top:503.82px;font-size:8.3px;line-height:8.3px;color:#333;text-decoration:underline;;-webkit-text-stroke:0">28</div>
<div class="t " style="left:146.50px;top:503.82px;font-size:8.3px;line-height:8.3px;color:#333;;-webkit-text-stroke:0">E</div>
<div class="t " style="left:199.30px;top:503.82px;font-size:8.3px;line-height:8.3px;color:#333;;-webkit-text-stroke:0">D</div>
<div class="t " style="left:319.00px;top:503.82px;font-size:8.3px;line-height:8.3px;color:#333;transform:scaleX(0.96);transform-origin:0 0;text-decoration:underline;;-webkit-text-stroke:0">FOLLOWING MERLIN</div>
<div class="t " style="left:625.00px;top:503.82px;font-size:8.3px;line-height:8.3px;color:#333;;-webkit-text-stroke:0">2/8</div>
<div class="t " style="left:684.00px;top:503.82px;font-size:8.3px;line-height:8.3px;color:#333;text-decoration:underline;;-webkit-text-stroke:0">1</div>
<div class="r " style="left:95.00px;top:513.80px;width:653.50px;height:12.25px;background:#ffff00;border-bottom:1px solid rgba(255,255,255,.18)"></div>
<div class="t " style="left:96.00px;top:516.07px;font-size:8.3px;line-height:8.3px;color:#333;text-decoration:underline;;-webkit-text-stroke:0">66</div>
<div class="t " style="left:146.50px;top:516.07px;font-size:8.3px;line-height:8.3px;color:#333;;-webkit-text-stroke:0">E</div>
<div class="t " style="left:199.30px;top:516.07px;font-size:8.3px;line-height:8.3px;color:#333;;-webkit-text-stroke:0">D</div>
<div class="t " style="left:319.00px;top:516.07px;font-size:8.3px;line-height:8.3px;color:#333;transform:scaleX(0.96);transform-origin:0 0;text-decoration:underline;;-webkit-text-stroke:0">GLASTONBURY TOR</div>
<div class="t " style="left:625.00px;top:516.07px;font-size:8.3px;line-height:8.3px;color:#333;;-webkit-text-stroke:0">3/8</div>
<div class="t " style="left:684.00px;top:516.07px;font-size:8.3px;line-height:8.3px;color:#333;text-decoration:underline;;-webkit-text-stroke:0">1</div>
<div class="r " style="left:95.00px;top:526.05px;width:653.50px;height:12.25px;background:#999999;border-bottom:1px solid rgba(255,255,255,.18)"></div>
<div class="t " style="left:319.00px;top:528.58px;font-size:8px;line-height:8px;color:#111;font-weight:bold;">End of Day # 15 - Feb 8</div>
<div class="t " style="left:625.00px;top:528.58px;font-size:8px;line-height:8px;color:#111;font-weight:bold;">1 5/8</div>
<div class="r " style="left:95.00px;top:538.30px;width:653.50px;height:12.25px;background:#ffff00;border-bottom:1px solid rgba(255,255,255,.18)"></div>
<div class="t " style="left:96.00px;top:540.57px;font-size:8.3px;line-height:8.3px;color:#333;text-decoration:underline;;-webkit-text-stroke:0">165</div>
<div class="t " style="left:146.50px;top:540.57px;font-size:8.3px;line-height:8.3px;color:#333;;-webkit-text-stroke:0">E</div>
<div class="t " style="left:199.30px;top:540.57px;font-size:8.3px;line-height:8.3px;color:#333;;-webkit-text-stroke:0">D</div>
<div class="t " style="left:319.00px;top:540.57px;font-size:8.3px;line-height:8.3px;color:#333;transform:scaleX(0.96);transform-origin:0 0;text-decoration:underline;;-webkit-text-stroke:0">GLASTONBURY TOR</div>
<div class="t " style="left:625.00px;top:540.57px;font-size:8.3px;line-height:8.3px;color:#333;;-webkit-text-stroke:0">1/8</div>
<div class="t " style="left:684.00px;top:540.57px;font-size:8.3px;line-height:8.3px;color:#333;text-decoration:underline;;-webkit-text-stroke:0">1</div>
<div class="r " style="left:95.00px;top:550.55px;width:653.50px;height:12.25px;background:#999999;border-bottom:1px solid rgba(255,255,255,.18)"></div>
<div class="t " style="left:319.00px;top:553.08px;font-size:8px;line-height:8px;color:#111;font-weight:bold;">End of Day # 15 - Feb 8</div>
<div class="t " style="left:625.00px;top:553.08px;font-size:8px;line-height:8px;color:#111;font-weight:bold;">2/8</div>
<div class="r " style="left:95.00px;top:562.80px;width:653.50px;height:12.25px;background:#008000;border-bottom:1px solid rgba(255,255,255,.18)"></div>
<div class="t " style="left:96.00px;top:565.07px;font-size:8.3px;line-height:8.3px;color:#073d07;text-decoration:underline;;-webkit-text-stroke:0">131</div>
<div class="t " style="left:146.50px;top:565.07px;font-size:8.3px;line-height:8.3px;color:#073d07;;-webkit-text-stroke:0">E</div>
<div class="t " style="left:199.30px;top:565.07px;font-size:8.3px;line-height:8.3px;color:#073d07;;-webkit-text-stroke:0">N-</div>
<div class="t " style="left:319.00px;top:565.07px;font-size:8.3px;line-height:8.3px;color:#073d07;transform:scaleX(0.96);transform-origin:0 0;text-decoration:underline;;-webkit-text-stroke:0">GLASTONBURY TOR</div>
<div class="t " style="left:625.00px;top:565.07px;font-size:8.3px;line-height:8.3px;color:#073d07;;-webkit-text-stroke:0">2/8</div>
<div class="t " style="left:684.00px;top:565.07px;font-size:8.3px;line-height:8.3px;color:#073d07;text-decoration:underline;;-webkit-text-stroke:0">1</div>
<div class="r " style="left:95.00px;top:575.05px;width:653.50px;height:12.25px;background:#000099;border-bottom:1px solid rgba(255,255,255,.18)"></div>
<div class="t " style="left:96.00px;top:577.32px;font-size:8.3px;line-height:8.3px;color:#e6e6ff;text-decoration:underline;;-webkit-text-stroke:0">38</div>
<div class="t " style="left:146.50px;top:577.32px;font-size:8.3px;line-height:8.3px;color:#e6e6ff;;-webkit-text-stroke:0">I</div>
<div class="t " style="left:199.30px;top:577.32px;font-size:8.3px;line-height:8.3px;color:#e6e6ff;;-webkit-text-stroke:0">N</div>
<div class="t " style="left:319.00px;top:577.32px;font-size:8.3px;line-height:8.3px;color:#e6e6ff;transform:scaleX(0.96);transform-origin:0 0;text-decoration:underline;;-webkit-text-stroke:0">GOVANNON'S FORGE</div>
<div class="t " style="left:625.00px;top:577.32px;font-size:8.3px;line-height:8.3px;color:#e6e6ff;;-webkit-text-stroke:0">4/8</div>
<div class="t " style="left:684.00px;top:577.32px;font-size:8.3px;line-height:8.3px;color:#e6e6ff;text-decoration:underline;;-webkit-text-stroke:0">1</div>
<div class="r " style="left:95.00px;top:587.30px;width:653.50px;height:12.25px;background:#000099;border-bottom:1px solid rgba(255,255,255,.18)"></div>
<div class="t " style="left:96.00px;top:589.57px;font-size:8.3px;line-height:8.3px;color:#e6e6ff;text-decoration:underline;;-webkit-text-stroke:0">42</div>
<div class="t " style="left:146.50px;top:589.57px;font-size:8.3px;line-height:8.3px;color:#e6e6ff;;-webkit-text-stroke:0">I</div>
<div class="t " style="left:199.30px;top:589.57px;font-size:8.3px;line-height:8.3px;color:#e6e6ff;;-webkit-text-stroke:0">N</div>
<div class="t " style="left:319.00px;top:589.57px;font-size:8.3px;line-height:8.3px;color:#e6e6ff;transform:scaleX(0.96);transform-origin:0 0;text-decoration:underline;;-webkit-text-stroke:0">GOVANNON'S FORGE</div>
<div class="t " style="left:625.00px;top:589.57px;font-size:8.3px;line-height:8.3px;color:#e6e6ff;;-webkit-text-stroke:0">3/8</div>
<div class="t " style="left:684.00px;top:589.57px;font-size:8.3px;line-height:8.3px;color:#e6e6ff;text-decoration:underline;;-webkit-text-stroke:0">1</div>
<div class="r " style="left:95.00px;top:599.55px;width:653.50px;height:12.25px;background:#000099;border-bottom:1px solid rgba(255,255,255,.18)"></div>
<div class="t " style="left:96.00px;top:601.82px;font-size:8.3px;line-height:8.3px;color:#e6e6ff;text-decoration:underline;;-webkit-text-stroke:0">44</div>
<div class="t " style="left:146.50px;top:601.82px;font-size:8.3px;line-height:8.3px;color:#e6e6ff;;-webkit-text-stroke:0">I</div>
<div class="t " style="left:199.30px;top:601.82px;font-size:8.3px;line-height:8.3px;color:#e6e6ff;;-webkit-text-stroke:0">N</div>
<div class="t " style="left:319.00px;top:601.82px;font-size:8.3px;line-height:8.3px;color:#e6e6ff;transform:scaleX(0.96);transform-origin:0 0;text-decoration:underline;;-webkit-text-stroke:0">GOVANNON'S FORGE</div>
<div class="t " style="left:625.00px;top:601.82px;font-size:8.3px;line-height:8.3px;color:#e6e6ff;;-webkit-text-stroke:0">2/8</div>
<div class="t " style="left:684.00px;top:601.82px;font-size:8.3px;line-height:8.3px;color:#e6e6ff;text-decoration:underline;;-webkit-text-stroke:0">1</div>
<div class="r " style="left:95.00px;top:611.80px;width:653.50px;height:12.25px;background:#ffff00;border-bottom:1px solid rgba(255,255,255,.18)"></div>
<div class="t " style="left:96.00px;top:614.07px;font-size:8.3px;line-height:8.3px;color:#333;text-decoration:underline;;-webkit-text-stroke:0">134</div>
<div class="t " style="left:146.50px;top:614.07px;font-size:8.3px;line-height:8.3px;color:#333;;-webkit-text-stroke:0">E</div>
<div class="t " style="left:199.30px;top:614.07px;font-size:8.3px;line-height:8.3px;color:#333;;-webkit-text-stroke:0">D</div>
<div class="t " style="left:319.00px;top:614.07px;font-size:8.3px;line-height:8.3px;color:#333;transform:scaleX(0.96);transform-origin:0 0;text-decoration:underline;;-webkit-text-stroke:0">HENGES</div>
<div class="t " style="left:625.00px;top:614.07px;font-size:8.3px;line-height:8.3px;color:#333;;-webkit-text-stroke:0">1/8</div>
<div class="t " style="left:684.00px;top:614.07px;font-size:8.3px;line-height:8.3px;color:#333;text-decoration:underline;;-webkit-text-stroke:0">1</div>
<div class="r " style="left:95.00px;top:624.05px;width:653.50px;height:12.25px;background:#ffff00;border-bottom:1px solid rgba(255,255,255,.18)"></div>
<div class="t " style="left:96.00px;top:626.32px;font-size:8.3px;line-height:8.3px;color:#333;text-decoration:underline;;-webkit-text-stroke:0">31</div>
<div class="t " style="left:146.50px;top:626.32px;font-size:8.3px;line-height:8.3px;color:#333;;-webkit-text-stroke:0">E</div>
<div class="t " style="left:199.30px;top:626.32px;font-size:8.3px;line-height:8.3px;color:#333;;-webkit-text-stroke:0">D</div>
<div class="t " style="left:319.00px;top:626.32px;font-size:8.3px;line-height:8.3px;color:#333;transform:scaleX(0.96);transform-origin:0 0;text-decoration:underline;;-webkit-text-stroke:0">HIDDEN SPRING</div>
<div class="t " style="left:625.00px;top:626.32px;font-size:8.3px;line-height:8.3px;color:#333;;-webkit-text-stroke:0">2/8</div>
<div class="t " style="left:684.00px;top:626.32px;font-size:8.3px;line-height:8.3px;color:#333;text-decoration:underline;;-webkit-text-stroke:0">1</div>
<div class="r " style="left:95.00px;top:636.30px;width:653.50px;height:12.25px;background:#006600;border-bottom:1px solid rgba(255,255,255,.18)"></div>
<div class="t " style="left:96.00px;top:638.57px;font-size:8.3px;line-height:8.3px;color:#d8ecd8;text-decoration:underline;;-webkit-text-stroke:0">33</div>
<div class="t " style="left:146.50px;top:638.57px;font-size:8.3px;line-height:8.3px;color:#d8ecd8;;-webkit-text-stroke:0">E</div>
<div class="t " style="left:199.30px;top:638.57px;font-size:8.3px;line-height:8.3px;color:#d8ecd8;;-webkit-text-stroke:0">N</div>
<div class="t " style="left:319.00px;top:638.57px;font-size:8.3px;line-height:8.3px;color:#d8ecd8;transform:scaleX(0.96);transform-origin:0 0;text-decoration:underline;;-webkit-text-stroke:0">HIDDEN SPRING</div>
<div class="t " style="left:625.00px;top:638.57px;font-size:8.3px;line-height:8.3px;color:#d8ecd8;;-webkit-text-stroke:0">2/8</div>
<div class="t " style="left:684.00px;top:638.57px;font-size:8.3px;line-height:8.3px;color:#d8ecd8;text-decoration:underline;;-webkit-text-stroke:0">1</div>
<div class="r " style="left:95.00px;top:648.55px;width:653.50px;height:12.25px;background:#999999;border-bottom:1px solid rgba(255,255,255,.18)"></div>
<div class="t " style="left:319.00px;top:651.08px;font-size:8px;line-height:8px;color:#111;font-weight:bold;">End of Day # 16 - Feb 9</div>
<div class="t " style="left:625.00px;top:651.08px;font-size:8px;line-height:8px;color:#111;font-weight:bold;">3 7/8</div>
<div class="r " style="left:95.00px;top:660.80px;width:653.50px;height:12.25px;background:#ffff33;border-bottom:1px solid rgba(255,255,255,.18)"></div>
<div class="t " style="left:96.00px;top:663.07px;font-size:8.3px;line-height:8.3px;color:#333;text-decoration:underline;;-webkit-text-stroke:0">30</div>
<div class="t " style="left:146.50px;top:663.07px;font-size:8.3px;line-height:8.3px;color:#333;;-webkit-text-stroke:0">E</div>
<div class="t " style="left:199.30px;top:663.07px;font-size:8.3px;line-height:8.3px;color:#333;;-webkit-text-stroke:0">D</div>
<div class="t " style="left:319.00px;top:663.07px;font-size:8.3px;line-height:8.3px;color:#333;transform:scaleX(0.96);transform-origin:0 0;text-decoration:underline;;-webkit-text-stroke:0">HIDDEN SPRING</div>
<div class="t " style="left:625.00px;top:663.07px;font-size:8.3px;line-height:8.3px;color:#333;;-webkit-text-stroke:0">2/8</div>
<div class="t " style="left:684.00px;top:663.07px;font-size:8.3px;line-height:8.3px;color:#333;text-decoration:underline;;-webkit-text-stroke:0">1</div>
<div class="r " style="left:95.00px;top:673.05px;width:653.50px;height:12.25px;background:#008000;border-bottom:1px solid rgba(255,255,255,.18)"></div>
<div class="t " style="left:96.00px;top:675.32px;font-size:8.3px;line-height:8.3px;color:#d8f0d8;text-decoration:underline;;-webkit-text-stroke:0">20</div>
<div class="t " style="left:146.50px;top:675.32px;font-size:8.3px;line-height:8.3px;color:#d8f0d8;;-webkit-text-stroke:0">E</div>
<div class="t " style="left:199.30px;top:675.32px;font-size:8.3px;line-height:8.3px;color:#d8f0d8;;-webkit-text-stroke:0">N-</div>
<div class="t " style="left:319.00px;top:675.32px;font-size:8.3px;line-height:8.3px;color:#d8f0d8;transform:scaleX(0.96);transform-origin:0 0;text-decoration:underline;;-webkit-text-stroke:0">HILLSIDE</div>
<div class="t " style="left:625.00px;top:675.32px;font-size:8.3px;line-height:8.3px;color:#d8f0d8;;-webkit-text-stroke:0">1 5/8</div>
<div class="t " style="left:684.00px;top:675.32px;font-size:8.3px;line-height:8.3px;color:#d8f0d8;text-decoration:underline;;-webkit-text-stroke:0">1 2 9 10 11 12 ..</div>
<div class="r " style="left:95.00px;top:685.30px;width:653.50px;height:12.25px;background:#008000;border-bottom:1px solid rgba(255,255,255,.18)"></div>
<div class="t " style="left:96.00px;top:687.57px;font-size:8.3px;line-height:8.3px;color:#d8f0d8;text-decoration:underline;;-webkit-text-stroke:0">52</div>
<div class="t " style="left:146.50px;top:687.57px;font-size:8.3px;line-height:8.3px;color:#d8f0d8;;-webkit-text-stroke:0">E</div>
<div class="t " style="left:199.30px;top:687.57px;font-size:8.3px;line-height:8.3px;color:#d8f0d8;;-webkit-text-stroke:0">N-</div>
<div class="t " style="left:319.00px;top:687.57px;font-size:8.3px;line-height:8.3px;color:#d8f0d8;transform:scaleX(0.96);transform-origin:0 0;text-decoration:underline;;-webkit-text-stroke:0">HILLSIDE</div>
<div class="t " style="left:625.00px;top:687.57px;font-size:8.3px;line-height:8.3px;color:#d8f0d8;;-webkit-text-stroke:0">1/8</div>
<div class="t " style="left:684.00px;top:687.57px;font-size:8.3px;line-height:8.3px;color:#d8f0d8;text-decoration:underline;;-webkit-text-stroke:0">1 2</div>
<div class="r " style="left:95.00px;top:697.55px;width:653.50px;height:12.25px;background:#006600;border-bottom:1px solid rgba(255,255,255,.18)"></div>
<div class="t " style="left:96.00px;top:699.82px;font-size:8.3px;line-height:8.3px;color:#d8ecd8;text-decoration:underline;;-webkit-text-stroke:0">46</div>
<div class="t " style="left:146.50px;top:699.82px;font-size:8.3px;line-height:8.3px;color:#d8ecd8;;-webkit-text-stroke:0">E</div>
<div class="t " style="left:199.30px;top:699.82px;font-size:8.3px;line-height:8.3px;color:#d8ecd8;;-webkit-text-stroke:0">N</div>
<div class="t " style="left:319.00px;top:699.82px;font-size:8.3px;line-height:8.3px;color:#d8ecd8;transform:scaleX(0.96);transform-origin:0 0;text-decoration:underline;;-webkit-text-stroke:0">HILLTOP ABOVE SALISBURY PLAIN</div>
<div class="t " style="left:625.00px;top:699.82px;font-size:8.3px;line-height:8.3px;color:#d8ecd8;;-webkit-text-stroke:0">2/8</div>
<div class="t " style="left:684.00px;top:699.82px;font-size:8.3px;line-height:8.3px;color:#d8ecd8;text-decoration:underline;;-webkit-text-stroke:0">1 7</div>
<div class="r " style="left:95.00px;top:709.80px;width:653.50px;height:12.25px;background:#000099;border-bottom:1px solid rgba(255,255,255,.18)"></div>
<div class="t " style="left:96.00px;top:712.07px;font-size:8.3px;line-height:8.3px;color:#e6e6ff;text-decoration:underline;;-webkit-text-stroke:0">107</div>
<div class="t " style="left:146.50px;top:712.07px;font-size:8.3px;line-height:8.3px;color:#e6e6ff;;-webkit-text-stroke:0">I</div>
<div class="t " style="left:199.30px;top:712.07px;font-size:8.3px;line-height:8.3px;color:#e6e6ff;;-webkit-text-stroke:0">N</div>
<div class="t " style="left:319.00px;top:712.07px;font-size:8.3px;line-height:8.3px;color:#e6e6ff;transform:scaleX(0.96);transform-origin:0 0;text-decoration:underline;;-webkit-text-stroke:0">INNER FORTRESS</div>
<div class="t " style="left:625.00px;top:712.07px;font-size:8.3px;line-height:8.3px;color:#e6e6ff;;-webkit-text-stroke:0">2/8</div>
<div class="t " style="left:684.00px;top:712.07px;font-size:8.3px;line-height:8.3px;color:#e6e6ff;text-decoration:underline;;-webkit-text-stroke:0">1</div>
</div></div>
<div class="r hdr" style="left:95.00px;top:394.00px;width:654.00px;height:14.60px;"></div>
<div class="t " style="left:96.00px;top:397.73px;font-size:8px;line-height:8px;color:#222;font-weight:bold;">Scene</div>
<div class="t " style="left:146.50px;top:397.73px;font-size:8px;line-height:8px;color:#222;font-weight:bold;">I/E</div>
<div class="t " style="left:199.30px;top:397.73px;font-size:8px;line-height:8px;color:#222;font-weight:bold;">D/N</div>
<div class="t " style="left:251.80px;top:397.73px;font-size:8px;line-height:8px;color:#222;font-weight:bold;">Scr day</div>
<div class="t " style="left:317.00px;top:397.73px;font-size:8px;line-height:8px;color:#222;font-weight:bold;">Location / Set</div>
<div class="t " style="left:625.00px;top:397.73px;font-size:8px;line-height:8px;color:#222;font-weight:bold;">Pages</div>
<div class="t " style="left:684.00px;top:397.73px;font-size:8px;line-height:8px;color:#222;font-weight:bold;">Scenes</div>
<div class="r " style="left:748.50px;top:408.60px;width:13.50px;height:304.40px;background:#f4f4f4;border-left:1px solid #e6e6e6"></div>
<div class="t" style="left:751px;top:702px;font-size:6px;color:#333">&#9660;</div>
<div class="t " style="left:328.00px;width:200px;text-align:center;top:725.07px;font-size:7px;line-height:7px;color:#888;-webkit-text-stroke:0">© 2011 LightSPEEDeps.com</div>
</div></div>
<div class="win" id="w3" style="left:354px;top:181px;width:654px;height:444px"><div class="pg" style="left:-354px;top:-181px">
<div class="r " style="left:370.00px;top:186.00px;width:48.00px;height:15.00px;background:linear-gradient(100deg,rgba(225,225,225,0) 0%,rgba(215,215,215,.55) 60%,rgba(230,230,230,.2));transform:skewX(-20deg);"></div>
<div class="logo1" style="left:356px;top:184px;font-size:16px;line-height:20px;transform:scaleX(.67);letter-spacing:-0.2px;-webkit-text-stroke:.5px #111">lightSPEED</div>
<div class="r" style="left:415.5px;top:187.5px;width:6px;height:9px;background:#3f6fb8"></div>
<div class="eps" style="left:419.5px;top:185px;width:22.5px;height:14.5px;"><div style="position:absolute;left:2.5px;top:-2.5px;font-size:13px;line-height:16px;transform:scaleX(.8);transform-origin:0 0">eps</div></div>
<div class="r" style="left:415.5px;top:189.5px;width:0;height:0;border-top:2.5px solid transparent;border-bottom:2.5px solid transparent;border-left:2.5px solid #fff"></div>
<div class="t " style="left:530.50px;width:300px;text-align:center;top:182.23px;font-size:8px;line-height:8px;color:#b0cbee;font-weight:bold;">Merlynn</div>
<div class="t " style="left:957.00px;top:181.97px;font-size:8.3px;line-height:8.3px;color:#3a7bd0;text-decoration:underline;">Logout</div>
<div class="t " style="left:988.50px;top:181.97px;font-size:8.3px;line-height:8.3px;color:#3a7bd0;text-decoration:underline;">Help</div>
<div class="t " style="left:604.00px;width:400px;text-align:right;top:191.57px;font-size:7.95px;line-height:7.95px;color:#222;">Welcome  Edgar Callinerri</div>
<div class="r nav" style="left:433.00px;top:204.60px;width:498.00px;height:13.40px;"></div>
<div class="r " style="left:718.60px;top:204.60px;width:69.40px;height:13.40px;background:#fff"></div>
<div class="t " style="left:429.40px;width:80px;text-align:center;top:208.23px;font-size:8px;line-height:8px;color:#606060;font-weight:bold;">Home</div>
<div class="t " style="left:500.40px;width:80px;text-align:center;top:208.23px;font-size:8px;line-height:8px;color:#606060;font-weight:bold;">Project</div>
<div class="t " style="left:571.40px;width:80px;text-align:center;top:208.23px;font-size:8px;line-height:8px;color:#606060;font-weight:bold;">People</div>
<div class="t " style="left:642.00px;width:80px;text-align:center;top:208.23px;font-size:8px;line-height:8px;color:#606060;font-weight:bold;">Script</div>
<div class="t " style="left:712.00px;width:80px;text-align:center;top:207.80px;font-size:8.5px;line-height:8.5px;color:#111;font-weight:bold;">Elements</div>
<div class="t " style="left:784.40px;width:80px;text-align:center;top:208.23px;font-size:8px;line-height:8px;color:#606060;font-weight:bold;">Schedule</div>
<div class="t " style="left:855.00px;width:80px;text-align:center;top:208.23px;font-size:8px;line-height:8px;color:#606060;font-weight:bold;">Reports</div>
<div class="r band" style="left:354.00px;top:218.00px;width:654.00px;height:15.50px;"></div>
<div class="r " style="left:655.00px;top:218.00px;width:193.00px;height:15.00px;background:#fff"></div>
<div class="t " style="left:660.00px;top:223.31px;font-size:7.9px;line-height:7.9px;color:#111;font-weight:bold;">Script Elements</div>
<div class="t " style="left:723.70px;top:223.06px;font-size:8.2px;line-height:8.2px;color:#3a7bd0;text-decoration:underline;">Real Elements</div>
<div class="t " style="left:782.50px;top:223.06px;font-size:8.2px;line-height:8.2px;color:#3a7bd0;text-decoration:underline;">Points Of Interest</div>
<div class="r " style="left:357.00px;top:233.50px;width:647.50px;height:383.50px;background:#efefef"></div>
<div class="r ib" style="left:357.00px;top:233.50px;width:647.50px;height:383.50px;"></div>
<div class="r pan" style="left:363.00px;top:241.00px;width:249.00px;height:369.00px;"></div>
<div class="t " style="left:368.00px;top:247.38px;font-size:9px;line-height:9px;color:#111;font-weight:bold;">Script Elements</div>
<div class="r btnb" style="left:576.00px;top:244.00px;width:33.00px;height:15.50px;"></div>
<div class="t " style="left:572.50px;width:40px;text-align:center;top:247.80px;font-size:8.5px;line-height:8.5px;color:#fff;">Add</div>
<div class="r " style="left:364.00px;top:262.50px;width:247.00px;height:1.00px;background:#d5e5f7"></div>
<div class="r " style="left:364.00px;top:263.50px;width:247.00px;height:17.50px;background:#fdfdfd"></div>
<div class="r " style="left:366.00px;top:267.30px;width:8.00px;height:7.70px;background:#fff;border:1px solid #aaa"></div>
<div class="t " style="left:376.60px;top:267.57px;font-size:7px;line-height:7px;color:#444;">Show Orphaned Elements only</div>
<div class="r inp" style="left:549.00px;top:266.40px;width:62.50px;height:11.80px;"></div>
<div class="t " style="left:552.00px;top:269.15px;font-size:7.5px;line-height:7.5px;color:#222;">Characters</div>
<div class="t" style="left:603px;top:269.5px;font-size:5.5px;color:#111">&#9660;</div>
<div class="r hdr" style="left:362.50px;top:280.00px;width:250.00px;height:16.00px;"></div>
<div class="t " style="left:364.00px;top:284.73px;font-size:8px;line-height:8px;color:#222;font-weight:bold;">ID</div>
<div class="r" style="left:375px;top:284px;width:8px;height:8px;border-radius:50%;background:radial-gradient(#bfe0ff,#4a90e0)"></div>
<div class="t " style="left:386.00px;top:284.73px;font-size:8px;line-height:8px;color:#222;font-weight:bold;">Name</div>
<div class="t " style="left:507.50px;top:284.73px;font-size:8px;line-height:8px;color:#222;font-weight:bold;">X's</div>
<svg class="r" style="left:529px;top:280px" width="14" height="14" viewBox="0 0 14 14"><g transform="rotate(-45 7 7)"><rect x="0.8" y="4.6" width="7" height="4.8" rx="2.2" fill="none" stroke="#555" stroke-width="1.6"/><rect x="6.2" y="4.6" width="7" height="4.8" rx="2.2" fill="none" stroke="#666" stroke-width="1.6"/></g></svg>
<div class="r " style="left:362.50px;top:296.50px;width:240.50px;height:16.65px;background:linear-gradient(#ffffff 45%,#efefef);border-bottom:1px solid #e4e4e4"></div>
<div class="t " style="left:364.00px;top:300.97px;font-size:8.3px;line-height:8.3px;color:#222;">1</div>
<div class="t " style="left:386.40px;top:301.48px;font-size:7.7px;line-height:7.7px;color:#222;transform:scaleX(0.82);transform-origin:0 0;">MERLIN</div>
<div class="t " style="left:507.50px;top:301.57px;font-size:7.6px;line-height:7.6px;color:#222;">113</div>
<svg class="r" style="left:531.5px;top:299.30px" width="11" height="12" viewBox="0 0 11 12"><path d="M1.6 3.2 L4.2 11.4" stroke="#444" stroke-width="1.4" fill="none"/><path d="M1.4 3 Q3.6 1.2 5.6 2.4 Q7.6 3.4 10.2 1 L10.4 5.6 Q8 8 5.8 6.8 Q3.8 5.8 2.6 7.2 Z" fill="#e21a1a"/><circle cx="6.2" cy="4.2" r=".8" fill="#fff"/><circle cx="8.4" cy="3.8" r=".7" fill="#fff"/></svg>
<div class="t " style="left:554.60px;top:301.91px;font-size:7.2px;line-height:7.2px;color:#222;">Characters</div>
<div class="r " style="left:362.50px;top:313.15px;width:240.50px;height:16.65px;background:linear-gradient(#ffffff 45%,#efefef);border-bottom:1px solid #e4e4e4"></div>
<div class="t " style="left:364.00px;top:317.62px;font-size:8.3px;line-height:8.3px;color:#222;">2</div>
<div class="t " style="left:386.40px;top:318.13px;font-size:7.7px;line-height:7.7px;color:#222;transform:scaleX(0.82);transform-origin:0 0;">NIMUE</div>
<div class="t " style="left:507.50px;top:318.22px;font-size:7.6px;line-height:7.6px;color:#222;">50</div>
<svg class="r" style="left:531.5px;top:315.95px" width="11" height="12" viewBox="0 0 11 12"><path d="M1.6 3.2 L4.2 11.4" stroke="#444" stroke-width="1.4" fill="none"/><path d="M1.4 3 Q3.6 1.2 5.6 2.4 Q7.6 3.4 10.2 1 L10.4 5.6 Q8 8 5.8 6.8 Q3.8 5.8 2.6 7.2 Z" fill="#e21a1a"/><circle cx="6.2" cy="4.2" r=".8" fill="#fff"/><circle cx="8.4" cy="3.8" r=".7" fill="#fff"/></svg>
<div class="t " style="left:554.60px;top:318.56px;font-size:7.2px;line-height:7.2px;color:#222;">Characters</div>
<div class="r " style="left:362.50px;top:329.80px;width:240.50px;height:16.65px;background:linear-gradient(#ffffff 45%,#efefef);border-bottom:1px solid #e4e4e4"></div>
<div class="t " style="left:364.00px;top:334.27px;font-size:8.3px;line-height:8.3px;color:#222;">3</div>
<div class="t " style="left:386.40px;top:334.78px;font-size:7.7px;line-height:7.7px;color:#222;transform:scaleX(0.82);transform-origin:0 0;">KATIGERN</div>
<div class="t " style="left:507.50px;top:334.87px;font-size:7.6px;line-height:7.6px;color:#222;">39</div>
<svg class="r" style="left:531.5px;top:332.60px" width="11" height="12" viewBox="0 0 11 12"><path d="M1.6 3.2 L4.2 11.4" stroke="#444" stroke-width="1.4" fill="none"/><path d="M1.4 3 Q3.6 1.2 5.6 2.4 Q7.6 3.4 10.2 1 L10.4 5.6 Q8 8 5.8 6.8 Q3.8 5.8 2.6 7.2 Z" fill="#e21a1a"/><circle cx="6.2" cy="4.2" r=".8" fill="#fff"/><circle cx="8.4" cy="3.8" r=".7" fill="#fff"/></svg>
<div class="t " style="left:554.60px;top:335.21px;font-size:7.2px;line-height:7.2px;color:#222;">Characters</div>
<div class="r " style="left:362.50px;top:346.45px;width:240.50px;height:16.65px;background:linear-gradient(#ffffff 45%,#efefef);border-bottom:1px solid #e4e4e4"></div>
<div class="t " style="left:364.00px;top:350.92px;font-size:8.3px;line-height:8.3px;color:#222;">4</div>
<div class="t " style="left:386.40px;top:351.43px;font-size:7.7px;line-height:7.7px;color:#222;transform:scaleX(0.82);transform-origin:0 0;">AMBROSIUS</div>
<div class="t " style="left:507.50px;top:351.52px;font-size:7.6px;line-height:7.6px;color:#222;">25</div>
<svg class="r" style="left:531.5px;top:349.25px" width="11" height="12" viewBox="0 0 11 12"><path d="M1.6 3.2 L4.2 11.4" stroke="#444" stroke-width="1.4" fill="none"/><path d="M1.4 3 Q3.6 1.2 5.6 2.4 Q7.6 3.4 10.2 1 L10.4 5.6 Q8 8 5.8 6.8 Q3.8 5.8 2.6 7.2 Z" fill="#e21a1a"/><circle cx="6.2" cy="4.2" r=".8" fill="#fff"/><circle cx="8.4" cy="3.8" r=".7" fill="#fff"/></svg>
<div class="t " style="left:554.60px;top:351.86px;font-size:7.2px;line-height:7.2px;color:#222;">Characters</div>
<div class="r " style="left:362.50px;top:363.10px;width:240.50px;height:16.65px;background:linear-gradient(#ffffff 45%,#efefef);border-bottom:1px solid #e4e4e4"></div>
<div class="t " style="left:364.00px;top:367.57px;font-size:8.3px;line-height:8.3px;color:#222;">5</div>
<div class="t " style="left:386.40px;top:368.08px;font-size:7.7px;line-height:7.7px;color:#222;transform:scaleX(0.82);transform-origin:0 0;">UTHER</div>
<div class="t " style="left:507.50px;top:368.17px;font-size:7.6px;line-height:7.6px;color:#222;">23</div>
<svg class="r" style="left:531.5px;top:365.90px" width="11" height="12" viewBox="0 0 11 12"><path d="M1.6 3.2 L4.2 11.4" stroke="#444" stroke-width="1.4" fill="none"/><path d="M1.4 3 Q3.6 1.2 5.6 2.4 Q7.6 3.4 10.2 1 L10.4 5.6 Q8 8 5.8 6.8 Q3.8 5.8 2.6 7.2 Z" fill="#e21a1a"/><circle cx="6.2" cy="4.2" r=".8" fill="#fff"/><circle cx="8.4" cy="3.8" r=".7" fill="#fff"/></svg>
<div class="t " style="left:554.60px;top:368.51px;font-size:7.2px;line-height:7.2px;color:#222;">Characters</div>
<div class="r " style="left:362.50px;top:379.75px;width:240.50px;height:16.65px;background:linear-gradient(#ffffff 45%,#efefef);border-bottom:1px solid #e4e4e4"></div>
<div class="t " style="left:364.00px;top:384.22px;font-size:8.3px;line-height:8.3px;color:#222;">6</div>
<div class="t " style="left:386.40px;top:384.73px;font-size:7.7px;line-height:7.7px;color:#222;transform:scaleX(0.82);transform-origin:0 0;">GWRLAIS</div>
<div class="t " style="left:507.50px;top:384.82px;font-size:7.6px;line-height:7.6px;color:#222;">23</div>
<svg class="r" style="left:531.5px;top:382.55px" width="11" height="12" viewBox="0 0 11 12"><path d="M1.6 3.2 L4.2 11.4" stroke="#444" stroke-width="1.4" fill="none"/><path d="M1.4 3 Q3.6 1.2 5.6 2.4 Q7.6 3.4 10.2 1 L10.4 5.6 Q8 8 5.8 6.8 Q3.8 5.8 2.6 7.2 Z" fill="#e21a1a"/><circle cx="6.2" cy="4.2" r=".8" fill="#fff"/><circle cx="8.4" cy="3.8" r=".7" fill="#fff"/></svg>
<div class="t " style="left:554.60px;top:385.16px;font-size:7.2px;line-height:7.2px;color:#222;">Characters</div>
<div class="r " style="left:362.50px;top:396.40px;width:240.50px;height:16.65px;background:linear-gradient(#ffffff 45%,#efefef);border-bottom:1px solid #e4e4e4"></div>
<div class="t " style="left:364.00px;top:400.87px;font-size:8.3px;line-height:8.3px;color:#222;">7</div>
<div class="t " style="left:386.40px;top:401.38px;font-size:7.7px;line-height:7.7px;color:#222;transform:scaleX(0.82);transform-origin:0 0;">ELDOL</div>
<div class="t " style="left:507.50px;top:401.47px;font-size:7.6px;line-height:7.6px;color:#222;">21</div>
<svg class="r" style="left:531.5px;top:399.20px" width="11" height="12" viewBox="0 0 11 12"><path d="M1.6 3.2 L4.2 11.4" stroke="#444" stroke-width="1.4" fill="none"/><path d="M1.4 3 Q3.6 1.2 5.6 2.4 Q7.6 3.4 10.2 1 L10.4 5.6 Q8 8 5.8 6.8 Q3.8 5.8 2.6 7.2 Z" fill="#e21a1a"/><circle cx="6.2" cy="4.2" r=".8" fill="#fff"/><circle cx="8.4" cy="3.8" r=".7" fill="#fff"/></svg>
<div class="t " style="left:554.60px;top:401.81px;font-size:7.2px;line-height:7.2px;color:#222;">Characters</div>
<div class="r " style="left:362.50px;top:413.05px;width:240.50px;height:16.65px;background:linear-gradient(#ffffff 45%,#efefef);border-bottom:1px solid #e4e4e4"></div>
<div class="t " style="left:364.00px;top:417.52px;font-size:8.3px;line-height:8.3px;color:#222;">8</div>
<div class="t " style="left:386.40px;top:418.03px;font-size:7.7px;line-height:7.7px;color:#222;transform:scaleX(0.82);transform-origin:0 0;">VORTIGERN</div>
<div class="t " style="left:507.50px;top:418.12px;font-size:7.6px;line-height:7.6px;color:#222;">19</div>
<svg class="r" style="left:531.5px;top:415.85px" width="11" height="12" viewBox="0 0 11 12"><path d="M1.6 3.2 L4.2 11.4" stroke="#444" stroke-width="1.4" fill="none"/><path d="M1.4 3 Q3.6 1.2 5.6 2.4 Q7.6 3.4 10.2 1 L10.4 5.6 Q8 8 5.8 6.8 Q3.8 5.8 2.6 7.2 Z" fill="#e21a1a"/><circle cx="6.2" cy="4.2" r=".8" fill="#fff"/><circle cx="8.4" cy="3.8" r=".7" fill="#fff"/></svg>
<div class="t " style="left:554.60px;top:418.46px;font-size:7.2px;line-height:7.2px;color:#222;">Characters</div>
<div class="r " style="left:362.50px;top:429.70px;width:240.50px;height:16.65px;background:linear-gradient(#f4f8fd,#dfeaf7);border-bottom:1px solid #a9c9ef"></div>
<div class="t " style="left:364.00px;top:434.17px;font-size:8.3px;line-height:8.3px;color:#4a86d0;">9</div>
<div class="t " style="left:386.40px;top:434.68px;font-size:7.7px;line-height:7.7px;color:#4a86d0;transform:scaleX(0.82);transform-origin:0 0;">ALDAN</div>
<div class="t " style="left:507.50px;top:434.77px;font-size:7.6px;line-height:7.6px;color:#4a86d0;">18</div>
<svg class="r" style="left:531.5px;top:432.50px" width="11" height="12" viewBox="0 0 11 12"><path d="M1.6 3.2 L4.2 11.4" stroke="#444" stroke-width="1.4" fill="none"/><path d="M1.4 3 Q3.6 1.2 5.6 2.4 Q7.6 3.4 10.2 1 L10.4 5.6 Q8 8 5.8 6.8 Q3.8 5.8 2.6 7.2 Z" fill="#e21a1a"/><circle cx="6.2" cy="4.2" r=".8" fill="#fff"/><circle cx="8.4" cy="3.8" r=".7" fill="#fff"/></svg>
<div class="t " style="left:554.60px;top:435.11px;font-size:7.2px;line-height:7.2px;color:#4a86d0;">Characters</div>
<div class="r " style="left:362.50px;top:446.35px;width:240.50px;height:16.65px;background:linear-gradient(#ffffff 45%,#efefef);border-bottom:1px solid #e4e4e4"></div>
<div class="t " style="left:364.00px;top:450.82px;font-size:8.3px;line-height:8.3px;color:#222;">10</div>
<div class="t " style="left:386.40px;top:451.33px;font-size:7.7px;line-height:7.7px;color:#222;transform:scaleX(0.82);transform-origin:0 0;">GOVANNON</div>
<div class="t " style="left:507.50px;top:451.42px;font-size:7.6px;line-height:7.6px;color:#222;">18</div>
<svg class="r" style="left:531.5px;top:449.15px" width="11" height="12" viewBox="0 0 11 12"><path d="M1.6 3.2 L4.2 11.4" stroke="#444" stroke-width="1.4" fill="none"/><path d="M1.4 3 Q3.6 1.2 5.6 2.4 Q7.6 3.4 10.2 1 L10.4 5.6 Q8 8 5.8 6.8 Q3.8 5.8 2.6 7.2 Z" fill="#e21a1a"/><circle cx="6.2" cy="4.2" r=".8" fill="#fff"/><circle cx="8.4" cy="3.8" r=".7" fill="#fff"/></svg>
<div class="t " style="left:554.60px;top:451.76px;font-size:7.2px;line-height:7.2px;color:#222;">Characters</div>
<div class="r " style="left:362.50px;top:463.00px;width:240.50px;height:16.65px;background:linear-gradient(#ffffff 45%,#efefef);border-bottom:1px solid #e4e4e4"></div>
<div class="t " style="left:364.00px;top:467.47px;font-size:8.3px;line-height:8.3px;color:#222;">11</div>
<div class="t " style="left:386.40px;top:467.98px;font-size:7.7px;line-height:7.7px;color:#222;transform:scaleX(0.82);transform-origin:0 0;">DYLAN</div>
<div class="t " style="left:507.50px;top:468.07px;font-size:7.6px;line-height:7.6px;color:#222;">13</div>
<svg class="r" style="left:531.5px;top:465.80px" width="11" height="12" viewBox="0 0 11 12"><path d="M1.6 3.2 L4.2 11.4" stroke="#444" stroke-width="1.4" fill="none"/><path d="M1.4 3 Q3.6 1.2 5.6 2.4 Q7.6 3.4 10.2 1 L10.4 5.6 Q8 8 5.8 6.8 Q3.8 5.8 2.6 7.2 Z" fill="#e21a1a"/><circle cx="6.2" cy="4.2" r=".8" fill="#fff"/><circle cx="8.4" cy="3.8" r=".7" fill="#fff"/></svg>
<div class="t " style="left:554.60px;top:468.41px;font-size:7.2px;line-height:7.2px;color:#222;">Characters</div>
<div class="r " style="left:362.50px;top:479.65px;width:240.50px;height:16.65px;background:linear-gradient(#ffffff 45%,#efefef);border-bottom:1px solid #e4e4e4"></div>
<div class="t " style="left:364.00px;top:484.12px;font-size:8.3px;line-height:8.3px;color:#222;">12</div>
<div class="t " style="left:386.40px;top:484.63px;font-size:7.7px;line-height:7.7px;color:#222;transform:scaleX(0.82);transform-origin:0 0;">BLAISE</div>
<div class="t " style="left:507.50px;top:484.72px;font-size:7.6px;line-height:7.6px;color:#222;">12</div>
<svg class="r" style="left:531.5px;top:482.45px" width="11" height="12" viewBox="0 0 11 12"><path d="M1.6 3.2 L4.2 11.4" stroke="#444" stroke-width="1.4" fill="none"/><path d="M1.4 3 Q3.6 1.2 5.6 2.4 Q7.6 3.4 10.2 1 L10.4 5.6 Q8 8 5.8 6.8 Q3.8 5.8 2.6 7.2 Z" fill="#e21a1a"/><circle cx="6.2" cy="4.2" r=".8" fill="#fff"/><circle cx="8.4" cy="3.8" r=".7" fill="#fff"/></svg>
<div class="t " style="left:554.60px;top:485.06px;font-size:7.2px;line-height:7.2px;color:#222;">Characters</div>
<div class="r " style="left:362.50px;top:496.30px;width:240.50px;height:16.65px;background:linear-gradient(#ffffff 45%,#efefef);border-bottom:1px solid #e4e4e4"></div>
<div class="t " style="left:364.00px;top:500.77px;font-size:8.3px;line-height:8.3px;color:#222;">13</div>
<div class="t " style="left:386.40px;top:501.28px;font-size:7.7px;line-height:7.7px;color:#222;transform:scaleX(0.82);transform-origin:0 0;">HENGEST</div>
<div class="t " style="left:507.50px;top:501.37px;font-size:7.6px;line-height:7.6px;color:#222;">12</div>
<svg class="r" style="left:531.5px;top:499.10px" width="11" height="12" viewBox="0 0 11 12"><path d="M1.6 3.2 L4.2 11.4" stroke="#444" stroke-width="1.4" fill="none"/><path d="M1.4 3 Q3.6 1.2 5.6 2.4 Q7.6 3.4 10.2 1 L10.4 5.6 Q8 8 5.8 6.8 Q3.8 5.8 2.6 7.2 Z" fill="#e21a1a"/><circle cx="6.2" cy="4.2" r=".8" fill="#fff"/><circle cx="8.4" cy="3.8" r=".7" fill="#fff"/></svg>
<div class="t " style="left:554.60px;top:501.71px;font-size:7.2px;line-height:7.2px;color:#222;">Characters</div>
<div class="r " style="left:362.50px;top:512.95px;width:240.50px;height:16.65px;background:linear-gradient(#ffffff 45%,#efefef);border-bottom:1px solid #e4e4e4"></div>
<div class="t " style="left:364.00px;top:517.42px;font-size:8.3px;line-height:8.3px;color:#222;">14</div>
<div class="t " style="left:386.40px;top:517.93px;font-size:7.7px;line-height:7.7px;color:#222;transform:scaleX(0.82);transform-origin:0 0;">DINAS</div>
<div class="t " style="left:507.50px;top:518.02px;font-size:7.6px;line-height:7.6px;color:#222;">12</div>
<svg class="r" style="left:531.5px;top:515.75px" width="11" height="12" viewBox="0 0 11 12"><path d="M1.6 3.2 L4.2 11.4" stroke="#444" stroke-width="1.4" fill="none"/><path d="M1.4 3 Q3.6 1.2 5.6 2.4 Q7.6 3.4 10.2 1 L10.4 5.6 Q8 8 5.8 6.8 Q3.8 5.8 2.6 7.2 Z" fill="#e21a1a"/><circle cx="6.2" cy="4.2" r=".8" fill="#fff"/><circle cx="8.4" cy="3.8" r=".7" fill="#fff"/></svg>
<div class="t " style="left:554.60px;top:518.36px;font-size:7.2px;line-height:7.2px;color:#222;">Characters</div>
<div class="r " style="left:362.50px;top:529.60px;width:240.50px;height:16.65px;background:linear-gradient(#ffffff 45%,#efefef);border-bottom:1px solid #e4e4e4"></div>
<div class="t " style="left:364.00px;top:534.07px;font-size:8.3px;line-height:8.3px;color:#222;">15</div>
<div class="t " style="left:386.40px;top:534.58px;font-size:7.7px;line-height:7.7px;color:#222;transform:scaleX(0.82);transform-origin:0 0;">HORSA</div>
<div class="t " style="left:507.50px;top:534.67px;font-size:7.6px;line-height:7.6px;color:#222;">11</div>
<svg class="r" style="left:531.5px;top:532.40px" width="11" height="12" viewBox="0 0 11 12"><path d="M1.6 3.2 L4.2 11.4" stroke="#444" stroke-width="1.4" fill="none"/><path d="M1.4 3 Q3.6 1.2 5.6 2.4 Q7.6 3.4 10.2 1 L10.4 5.6 Q8 8 5.8 6.8 Q3.8 5.8 2.6 7.2 Z" fill="#e21a1a"/><circle cx="6.2" cy="4.2" r=".8" fill="#fff"/><circle cx="8.4" cy="3.8" r=".7" fill="#fff"/></svg>
<div class="t " style="left:554.60px;top:535.01px;font-size:7.2px;line-height:7.2px;color:#222;">Characters</div>
<div class="r " style="left:362.50px;top:546.25px;width:240.50px;height:16.65px;background:linear-gradient(#ffffff 45%,#efefef);border-bottom:1px solid #e4e4e4"></div>
<div class="t " style="left:364.00px;top:550.72px;font-size:8.3px;line-height:8.3px;color:#222;">16</div>
<div class="t " style="left:386.40px;top:551.23px;font-size:7.7px;line-height:7.7px;color:#222;transform:scaleX(0.82);transform-origin:0 0;">LADY OF THE LAKE</div>
<div class="t " style="left:507.50px;top:551.32px;font-size:7.6px;line-height:7.6px;color:#222;">11</div>
<svg class="r" style="left:531.5px;top:549.05px" width="11" height="12" viewBox="0 0 11 12"><path d="M1.6 3.2 L4.2 11.4" stroke="#444" stroke-width="1.4" fill="none"/><path d="M1.4 3 Q3.6 1.2 5.6 2.4 Q7.6 3.4 10.2 1 L10.4 5.6 Q8 8 5.8 6.8 Q3.8 5.8 2.6 7.2 Z" fill="#e21a1a"/><circle cx="6.2" cy="4.2" r=".8" fill="#fff"/><circle cx="8.4" cy="3.8" r=".7" fill="#fff"/></svg>
<div class="t " style="left:554.60px;top:551.66px;font-size:7.2px;line-height:7.2px;color:#222;">Characters</div>
<div class="r " style="left:362.50px;top:562.90px;width:240.50px;height:16.65px;background:linear-gradient(#ffffff 45%,#efefef);border-bottom:1px solid #e4e4e4"></div>
<div class="t " style="left:364.00px;top:567.37px;font-size:8.3px;line-height:8.3px;color:#222;">17</div>
<div class="t " style="left:386.40px;top:567.88px;font-size:7.7px;line-height:7.7px;color:#222;transform:scaleX(0.82);transform-origin:0 0;">ROWENA</div>
<div class="t " style="left:507.50px;top:567.97px;font-size:7.6px;line-height:7.6px;color:#222;">10</div>
<svg class="r" style="left:531.5px;top:565.70px" width="11" height="12" viewBox="0 0 11 12"><path d="M1.6 3.2 L4.2 11.4" stroke="#444" stroke-width="1.4" fill="none"/><path d="M1.4 3 Q3.6 1.2 5.6 2.4 Q7.6 3.4 10.2 1 L10.4 5.6 Q8 8 5.8 6.8 Q3.8 5.8 2.6 7.2 Z" fill="#e21a1a"/><circle cx="6.2" cy="4.2" r=".8" fill="#fff"/><circle cx="8.4" cy="3.8" r=".7" fill="#fff"/></svg>
<div class="t " style="left:554.60px;top:568.31px;font-size:7.2px;line-height:7.2px;color:#222;">Characters</div>
<div class="r " style="left:362.50px;top:579.55px;width:240.50px;height:16.65px;background:linear-gradient(#ffffff 45%,#efefef);border-bottom:1px solid #e4e4e4"></div>
<div class="t " style="left:364.00px;top:584.02px;font-size:8.3px;line-height:8.3px;color:#222;">18</div>
<div class="t " style="left:386.40px;top:584.53px;font-size:7.7px;line-height:7.7px;color:#222;transform:scaleX(0.82);transform-origin:0 0;">WARRIORS</div>
<div class="t " style="left:507.50px;top:584.62px;font-size:7.6px;line-height:7.6px;color:#222;">10</div>
<svg class="r" style="left:531.5px;top:582.35px" width="11" height="12" viewBox="0 0 11 12"><path d="M1.6 3.2 L4.2 11.4" stroke="#444" stroke-width="1.4" fill="none"/><path d="M1.4 3 Q3.6 1.2 5.6 2.4 Q7.6 3.4 10.2 1 L10.4 5.6 Q8 8 5.8 6.8 Q3.8 5.8 2.6 7.2 Z" fill="#e21a1a"/><circle cx="6.2" cy="4.2" r=".8" fill="#fff"/><circle cx="8.4" cy="3.8" r=".7" fill="#fff"/></svg>
<div class="t " style="left:554.60px;top:584.96px;font-size:7.2px;line-height:7.2px;color:#222;">Characters</div>
<div class="r " style="left:362.50px;top:596.20px;width:240.50px;height:16.65px;background:linear-gradient(#ffffff 45%,#efefef);border-bottom:1px solid #e4e4e4"></div>
<div class="t " style="left:364.00px;top:600.67px;font-size:8.3px;line-height:8.3px;color:#222;">19</div>
<div class="t " style="left:386.40px;top:601.18px;font-size:7.7px;line-height:7.7px;color:#222;transform:scaleX(0.82);transform-origin:0 0;">YGERNA</div>
<div class="t " style="left:507.50px;top:601.27px;font-size:7.6px;line-height:7.6px;color:#222;">7</div>
<svg class="r" style="left:531.5px;top:599.00px" width="11" height="12" viewBox="0 0 11 12"><path d="M1.6 3.2 L4.2 11.4" stroke="#444" stroke-width="1.4" fill="none"/><path d="M1.4 3 Q3.6 1.2 5.6 2.4 Q7.6 3.4 10.2 1 L10.4 5.6 Q8 8 5.8 6.8 Q3.8 5.8 2.6 7.2 Z" fill="#e21a1a"/><circle cx="6.2" cy="4.2" r=".8" fill="#fff"/><circle cx="8.4" cy="3.8" r=".7" fill="#fff"/></svg>
<div class="t " style="left:554.60px;top:601.61px;font-size:7.2px;line-height:7.2px;color:#222;">Characters</div>
<div class="r " style="left:603.00px;top:296.50px;width:9.00px;height:312.50px;background:#f2f2f2;border-left:1px solid #e0e0e0"></div>
<div class="r " style="left:604.50px;top:308.50px;width:6.50px;height:268.50px;background:linear-gradient(90deg,#f4f4f4,#d6d6d6);border:1px solid #c4c4c4;border-radius:2px"></div>
<div class="t" style="left:605px;top:298px;font-size:5.5px;color:#333">&#9650;</div>
<div class="t" style="left:605px;top:598px;font-size:5.5px;color:#333">&#9660;</div>
<div class="r pan" style="left:621.00px;top:241.60px;width:377.00px;height:367.40px;"></div>
<div class="t " style="left:625.00px;top:246.76px;font-size:9.5px;line-height:9.5px;color:#111;font-weight:bold;">ALDAN</div>
<div class="r btnl" style="left:962.00px;top:244.00px;width:33.00px;height:16.00px;"></div>
<div class="t " style="left:953.50px;width:50px;text-align:center;top:248.30px;font-size:8.5px;line-height:8.5px;color:#fafafa;font-weight:bold;">Edit</div>
<div class="r tabs" style="left:621.00px;top:263.60px;width:376.00px;height:17.60px;"></div>
<div class="r " style="left:622.00px;top:264.60px;width:39.70px;height:16.60px;background:#fff"></div>
<div class="t " style="left:629.40px;top:268.50px;font-size:8.5px;line-height:8.5px;color:#3b7fd4;">Details</div>
<div class="t " style="left:669.00px;top:268.50px;font-size:8.5px;line-height:8.5px;color:#8a8a8a;">Images</div>
<div class="t " style="left:625.00px;top:286.80px;font-size:7.8px;line-height:7.8px;color:#222;font-weight:bold;">Category:</div>
<div class="r " style="left:672.80px;top:284.00px;width:95.20px;height:12.20px;background:#fff;border:1px solid #d8d8d8;border-radius:2px"></div>
<div class="t " style="left:676.00px;top:286.47px;font-size:8.3px;line-height:8.3px;color:#999;">Characters</div>
<div class="t" style="left:758px;top:287.5px;font-size:5.5px;color:#999">&#9660;</div>
<div class="r " style="left:880.50px;top:285.00px;width:8.00px;height:8.00px;background:#fff;border:1px solid #8a9ab8"></div>
<div class="t " style="left:881.00px;top:285.23px;font-size:8px;line-height:8px;color:#35507a;">✓</div>
<div class="t " style="left:890.00px;top:284.97px;font-size:7.95px;line-height:7.95px;color:#222;">Real World Element Required</div>
<div class="t " style="left:625.00px;top:303.40px;font-size:7.8px;line-height:7.8px;color:#222;font-weight:bold;">Name:</div>
<div class="t " style="left:650.00px;top:303.23px;font-size:8px;line-height:8px;color:#d02020;">*</div>
<div class="r inp" style="left:672.80px;top:301.00px;width:125.50px;height:12.20px;"></div>
<div class="t " style="left:675.00px;top:303.47px;font-size:8.3px;line-height:8.3px;color:#222;">ALDAN</div>
<div class="t " style="left:625.00px;top:317.60px;font-size:7.8px;line-height:7.8px;color:#222;font-weight:bold;">Description:</div>
<div class="r inp" style="left:672.80px;top:317.00px;width:142.70px;height:25.50px;"></div>
<div class="t " style="left:675.00px;top:318.53px;font-size:8.0px;line-height:8.0px;color:#222;">27 yo, 6' tall, rugged features, full</div>
<div class="t " style="left:675.00px;top:327.23px;font-size:8.0px;line-height:8.0px;color:#222;">beard</div>
<div class="r " style="left:805.00px;top:318.00px;width:10.00px;height:23.50px;background:#f0f0f0;border-left:1px solid #e0e0e0"></div>
<div class="t" style="left:806.5px;top:320px;font-size:5px;color:#666">&#9650;</div>
<div class="t" style="left:806.5px;top:334px;font-size:5px;color:#666">&#9660;</div>
<div class="r " style="left:828.80px;top:304.40px;width:165.90px;height:79.00px;background:#eef5fd;border:1px solid #c7dbf2"></div>
<div class="r " style="left:831.00px;top:300.00px;width:74.00px;height:10.00px;background:#fff"></div>
<div class="t " style="left:832.80px;top:302.65px;font-size:7.5px;line-height:7.5px;color:#3b7fd4;font-weight:bold">Linked to/Played by</div>
<div class="r btno" style="left:953.00px;top:298.70px;width:36.70px;height:11.30px;"></div>
<div class="t " style="left:946.30px;width:50px;text-align:center;top:300.90px;font-size:7.8px;line-height:7.8px;color:#e8962a;font-weight:bold">Add Link</div>
<div class="r hdr" style="left:830.00px;top:318.50px;width:163.00px;height:8.80px;"></div>
<div class="t " style="left:836.00px;top:319.15px;font-size:7.5px;line-height:7.5px;color:#222;font-weight:bold;">Name</div>
<div class="t " style="left:953.00px;top:319.15px;font-size:7.5px;line-height:7.5px;color:#222;font-weight:bold;">Status</div>
<div class="r " style="left:624.30px;top:352.80px;width:196.00px;height:30.20px;background:#eef5fd;border:1px solid #c7dbf2"></div>
<div class="r " style="left:627.00px;top:348.00px;width:69.00px;height:10.00px;background:#fff"></div>
<div class="t " style="left:628.70px;top:350.14px;font-size:8.1px;line-height:8.1px;color:#3b7fd4;">Responsible Party</div>
<div class="r btno" style="left:785.00px;top:347.30px;width:31.00px;height:11.00px;"></div>
<div class="t " style="left:775.50px;width:50px;text-align:center;top:349.40px;font-size:7.8px;line-height:7.8px;color:#e8962a;font-weight:bold">Create</div>
<div class="r inp" style="left:631.40px;top:365.40px;width:170.20px;height:12.30px;"></div>
<div class="t " style="left:634.00px;top:367.73px;font-size:8.0px;line-height:8.0px;color:#222;">(None selected)</div>
<div class="t" style="left:792px;top:368.5px;font-size:5.5px;color:#111">&#9660;</div>
<div class="r " style="left:622.00px;top:390.00px;width:375.00px;height:11.00px;background:#f4f4f4"></div>
<div class="r " style="left:622.00px;top:401.00px;width:375.00px;height:1.00px;background:#d7e6f7"></div>
<div class="t " style="left:624.80px;top:414.80px;font-size:7.8px;line-height:7.8px;color:#3b7fd4;">DooD:</div>
<div class="r " style="left:655.00px;top:414.50px;width:8.00px;height:8.00px;background:#fff;border:1px solid #8a9ab8"></div>
<div class="t " style="left:655.50px;top:414.73px;font-size:8px;line-height:8px;color:#35507a;">✓</div>
<div class="t " style="left:665.00px;top:415.05px;font-size:7.5px;line-height:7.5px;color:#222;font-weight:bold;">Allow Drops &amp; Pickups</div>
<div class="r inp" style="left:762.70px;top:413.00px;width:17.30px;height:12.50px;"></div>
<div class="t " style="left:765.00px;top:415.47px;font-size:8.3px;line-height:8.3px;color:#222;">10</div>
<div class="t " style="left:784.00px;top:415.05px;font-size:7.5px;line-height:7.5px;color:#222;font-weight:bold;"># of Hold Days</div>
<div class="t " style="left:847.60px;top:404.57px;font-size:7.6px;line-height:7.6px;color:#222;font-weight:bold;">Time Period used for Drop:</div>
<div class="r inp" style="left:847.60px;top:414.00px;width:128.00px;height:11.50px;"></div>
<div class="t " style="left:851.00px;top:416.65px;font-size:7.5px;line-height:7.5px;color:#222;">None</div>
<div class="t" style="left:966px;top:417px;font-size:5.5px;color:#111">&#9660;</div>
<div class="r " style="left:622.00px;top:429.70px;width:375.00px;height:1.00px;background:#e6e6e6"></div>
<div class="r " style="left:627.00px;top:438.00px;width:365.50px;height:142.80px;background:#eef5fd;border:1px solid #c7dbf2"></div>
<div class="r " style="left:629.00px;top:434.00px;width:72.00px;height:10.00px;background:#fff"></div>
<div class="t " style="left:631.00px;top:434.90px;font-size:7.8px;line-height:7.8px;color:#3b7fd4;font-weight:bold">Appears in Scenes</div>
<div class="r btno" style="left:943.70px;top:432.60px;width:44.70px;height:11.60px;"></div>
<div class="t " style="left:936.00px;width:60px;text-align:center;top:434.90px;font-size:7.8px;line-height:7.8px;color:#e8962a;font-weight:bold">Add Scene</div>
<div class="r hdr" style="left:629.00px;top:448.30px;width:362.00px;height:10.40px;"></div>
<div class="t " style="left:645.00px;top:450.57px;font-size:7px;line-height:7px;color:#222;font-weight:bold;">#</div>
<div class="t " style="left:679.50px;top:450.57px;font-size:7px;line-height:7px;color:#222;font-weight:bold;">Heading</div>
<div class="r " style="left:629.00px;top:458.70px;width:352.00px;height:16.60px;background:linear-gradient(#ffffff 45%,#efefef);border-bottom:1px solid #e4e4e4"></div>
<div class="t " style="left:629.50px;top:463.65px;font-size:7.5px;line-height:7.5px;color:#d83030;">✖</div>
<div class="t " style="left:645.50px;top:463.27px;font-size:8.3px;line-height:8.3px;color:#3a7bd0;text-decoration:underline;">3</div>
<div class="t " style="left:682.80px;top:463.57px;font-size:7.6px;line-height:7.6px;color:#222;transform:scaleX(0.875);transform-origin:0 0;">EXT. FESTIVAL OF THE BELTANE - NIGHT</div>
<div class="r " style="left:629.00px;top:475.30px;width:352.00px;height:16.60px;background:linear-gradient(#ffffff 45%,#efefef);border-bottom:1px solid #e4e4e4"></div>
<div class="t " style="left:629.50px;top:480.25px;font-size:7.5px;line-height:7.5px;color:#d83030;">✖</div>
<div class="t " style="left:645.50px;top:479.87px;font-size:8.3px;line-height:8.3px;color:#3a7bd0;text-decoration:underline;">4</div>
<div class="t " style="left:682.80px;top:480.17px;font-size:7.6px;line-height:7.6px;color:#222;transform:scaleX(0.875);transform-origin:0 0;">EXT. CARMARTHEN - NIGHT</div>
<div class="r " style="left:629.00px;top:491.90px;width:352.00px;height:16.60px;background:linear-gradient(#ffffff 45%,#efefef);border-bottom:1px solid #e4e4e4"></div>
<div class="t " style="left:629.50px;top:496.85px;font-size:7.5px;line-height:7.5px;color:#d83030;">✖</div>
<div class="t " style="left:645.50px;top:496.47px;font-size:8.3px;line-height:8.3px;color:#3a7bd0;text-decoration:underline;">6</div>
<div class="t " style="left:682.80px;top:496.77px;font-size:7.6px;line-height:7.6px;color:#222;transform:scaleX(0.875);transform-origin:0 0;">INT. ALDAN'S ROOM - NIGHT</div>
<div class="r " style="left:629.00px;top:508.50px;width:352.00px;height:16.60px;background:linear-gradient(#ffffff 45%,#efefef);border-bottom:1px solid #e4e4e4"></div>
<div class="t " style="left:629.50px;top:513.45px;font-size:7.5px;line-height:7.5px;color:#d83030;">✖</div>
<div class="t " style="left:645.50px;top:513.07px;font-size:8.3px;line-height:8.3px;color:#3a7bd0;text-decoration:underline;">9</div>
<div class="t " style="left:682.80px;top:513.37px;font-size:7.6px;line-height:7.6px;color:#222;transform:scaleX(0.875);transform-origin:0 0;">EXT. CARMARTHEN PALISADES - DAY</div>
<div class="r " style="left:629.00px;top:525.10px;width:352.00px;height:16.60px;background:linear-gradient(#ffffff 45%,#efefef);border-bottom:1px solid #e4e4e4"></div>
<div class="t " style="left:629.50px;top:530.05px;font-size:7.5px;line-height:7.5px;color:#d83030;">✖</div>
<div class="t " style="left:645.50px;top:529.67px;font-size:8.3px;line-height:8.3px;color:#3a7bd0;text-decoration:underline;">17</div>
<div class="t " style="left:682.80px;top:529.97px;font-size:7.6px;line-height:7.6px;color:#222;transform:scaleX(0.875);transform-origin:0 0;">EXT. COURTYARD [CONTINUED] - MORNING</div>
<div class="r " style="left:629.00px;top:541.70px;width:352.00px;height:16.60px;background:linear-gradient(#ffffff 45%,#efefef);border-bottom:1px solid #e4e4e4"></div>
<div class="t " style="left:629.50px;top:546.65px;font-size:7.5px;line-height:7.5px;color:#d83030;">✖</div>
<div class="t " style="left:645.50px;top:546.27px;font-size:8.3px;line-height:8.3px;color:#3a7bd0;text-decoration:underline;">19</div>
<div class="t " style="left:682.80px;top:546.57px;font-size:7.6px;line-height:7.6px;color:#222;transform:scaleX(0.875);transform-origin:0 0;">EXT. COURTYARD [CONTINUED] - MORNING</div>
<div class="r " style="left:629.00px;top:558.30px;width:352.00px;height:16.60px;background:linear-gradient(#ffffff 45%,#efefef);border-bottom:1px solid #e4e4e4"></div>
<div class="t " style="left:629.50px;top:563.25px;font-size:7.5px;line-height:7.5px;color:#d83030;">✖</div>
<div class="t " style="left:645.50px;top:562.87px;font-size:8.3px;line-height:8.3px;color:#3a7bd0;text-decoration:underline;">20</div>
<div class="t " style="left:682.80px;top:563.17px;font-size:7.6px;line-height:7.6px;color:#222;transform:scaleX(0.875);transform-origin:0 0;">EXT. HILLSIDE - DUSK</div>
<div class="r " style="left:629.00px;top:575.00px;width:352.00px;height:5.00px;background:#fff"></div>
<div class="r " style="left:981.00px;top:458.70px;width:10.30px;height:121.30px;background:#f2f2f2;border-left:1px solid #e0e0e0"></div>
<div class="r " style="left:982.50px;top:470.00px;width:7.50px;height:38.40px;background:linear-gradient(90deg,#f4f4f4,#d6d6d6);border:1px solid #c4c4c4;border-radius:2px"></div>
<div class="t" style="left:983px;top:461px;font-size:5.5px;color:#333">&#9650;</div>
<div class="t" style="left:983px;top:571px;font-size:5.5px;color:#333">&#9660;</div>
<div class="r " style="left:622.00px;top:581.00px;width:375.00px;height:6.00px;background:#f4f4f4"></div>
<div class="r " style="left:622.00px;top:587.00px;width:375.00px;height:1.00px;background:#d7e6f7"></div>
<div class="r " style="left:926.40px;top:592.00px;width:32.00px;height:14.00px;background:linear-gradient(#f0a54a,#df8a1c);border:1px solid #c77a18;border-radius:2px"></div>
<div class="t " style="left:922.40px;width:40px;text-align:center;top:595.30px;font-size:8.5px;line-height:8.5px;color:#fff6e0;">Save</div>
<div class="r btng" style="left:962.40px;top:592.00px;width:31.60px;height:14.00px;"></div>
<div class="t " style="left:953.20px;width:50px;text-align:center;top:595.30px;font-size:8.5px;line-height:8.5px;color:#eee;">Cancel</div>
<div class="t " style="left:580.50px;width:200px;text-align:center;top:618.07px;font-size:7px;line-height:7px;color:#888;-webkit-text-stroke:0">© 2011 LightSPEEDeps.com</div>
</div></div>
</body></html>
